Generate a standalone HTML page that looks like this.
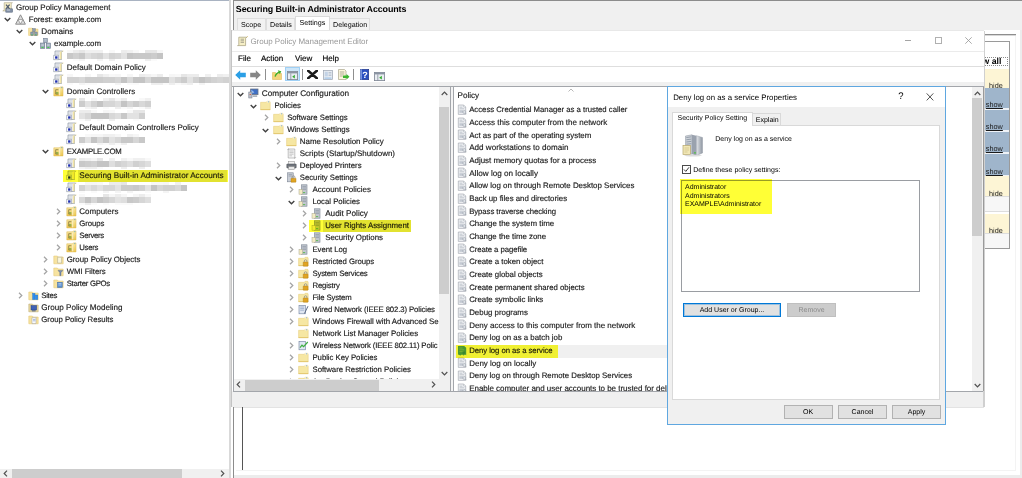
<!DOCTYPE html><html><head><meta charset="utf-8"><title>Group Policy Management</title><style>
html,body{margin:0;padding:0}
body{width:1022px;height:478px;overflow:hidden;background:#fff;position:relative;font-family:"Liberation Sans", sans-serif;text-rendering:geometricPrecision;}
#root{position:absolute;left:0;top:0;width:1022px;height:478px;will-change:transform}
.r{position:absolute}
.ic{position:absolute;display:block;line-height:0}
.ic svg{display:block;width:100%;height:100%}
.t{position:absolute;white-space:pre;line-height:12px;height:12px;font-size:8px;color:#1a1a1a;-webkit-text-stroke:.15px currentColor;margin-top:.9px}
.u{text-decoration:underline}

</style></head><body><div id="root">
<div class="r" style="left:0px;top:0px;width:229px;height:478px;background:#fff;"></div>
<div class="r" style="left:0px;top:0px;width:229px;height:1px;background:#a9b3c2;"></div>
<div class="ic" style="left:2px;top:2px;width:11px;height:11px"><svg width="11" height="11" viewBox="0 0 11 11"><path d="M2.200 .7h8.200c-.9.300-1.100.9-1.100 1.600v6.600H.8c1-.3 1.400-.8 1.400-1.700z" fill="#f5eec8" stroke="#a9a384" stroke-width=".6"/><path d="M4 2.600l3.600 4.200M7.600 2.600L4 6.800" stroke="#4f5a6b" stroke-width="1.300"/><rect x="3.800" y="6.800" width="6.800" height="3.400" fill="#7f8da3" stroke="#56647a" stroke-width=".5"/><path d="M4.800 8h3.400" stroke="#dfe6ee" stroke-width=".8"/></svg></div>
<div class="t " style="left:16.0px;top:1.0px;font-size:7.973px;color:#1a1a1a;">Group Policy Management</div>
<svg class="ic" style="left:4px;top:17px" width="7" height="5" viewBox="0 0 7 5"><path d="M.7 1l2.800 2.800L6.300 1" fill="none" stroke="#404040" stroke-width="1.350"/></svg>
<div class="ic" style="left:15px;top:14px;width:11px;height:11px"><svg width="11" height="11" viewBox="0 0 11 11"><path d="M5.500 .8L10.400 10.200H.6z" fill="#dcdcdc" stroke="#858585" stroke-width=".9" stroke-linejoin="round"/><path d="M3.100 5.600h4.800L5.500 10z" fill="#fff" stroke="#858585" stroke-width=".7" stroke-linejoin="round"/></svg></div>
<div class="t " style="left:28.667px;top:13.0px;font-size:7.797px;color:#1a1a1a;">Forest: example.com</div>
<svg class="ic" style="left:16px;top:29px" width="7" height="5" viewBox="0 0 7 5"><path d="M.7 1l2.800 2.800L6.300 1" fill="none" stroke="#404040" stroke-width="1.350"/></svg>
<div class="ic" style="left:28px;top:26px;width:11px;height:11px"><svg width="11" height="11" viewBox="0 0 11 11"><path d="M.6 2.2h3.6l.8.9h5v6.3H.6z" fill="#f7e3a0" stroke="#e3c56c" stroke-width=".5"/><rect x="4.6" y="2.6" width="2.6" height="3" fill="#8e9db0" stroke="#5d6c80" stroke-width=".4"/><rect x="2.8" y="6" width="2.6" height="3.6" fill="#8e9db0" stroke="#5d6c80" stroke-width=".4"/><rect x="6.6" y="6" width="2.6" height="3.6" fill="#8e9db0" stroke="#5d6c80" stroke-width=".4"/><rect x="3.4" y="8.4" width="1.2" height=".8" fill="#3fc43f"/><rect x="7.2" y="8.4" width="1.2" height=".8" fill="#3fc43f"/></svg></div>
<div class="t " style="left:41.334px;top:25.0px;font-size:8.135px;color:#1a1a1a;">Domains</div>
<svg class="ic" style="left:29px;top:41px" width="7" height="5" viewBox="0 0 7 5"><path d="M.7 1l2.800 2.800L6.300 1" fill="none" stroke="#404040" stroke-width="1.350"/></svg>
<div class="ic" style="left:40px;top:38px;width:11px;height:11px"><svg width="11" height="11" viewBox="0 0 11 11"><rect x="3.600" y=".4" width="3.800" height="4.200" fill="#9aa8ba" stroke="#5d6c80" stroke-width=".45"/><rect x=".4" y="5" width="4.400" height="5.600" fill="#9aa8ba" stroke="#5d6c80" stroke-width=".45"/><rect x="6.200" y="5" width="4.400" height="5.600" fill="#9aa8ba" stroke="#5d6c80" stroke-width=".45"/><rect x="1.500" y="8.900" width="2" height="1" fill="#3fd03f"/><rect x="7.300" y="8.900" width="2" height="1" fill="#3fd03f"/><path d="M1.300 6.300h2.600M1.300 7.600h2.600M7.100 6.300h2.600M7.100 7.600h2.600M4.400 1.700h2.200M4.400 3h2.200" stroke="#dfe5ec" stroke-width=".55"/></svg></div>
<div class="t " style="left:54.001px;top:37.0px;font-size:7.937px;color:#1a1a1a;">example.com</div>
<div class="ic" style="left:53px;top:50px;width:11px;height:11px"><svg width="11" height="11" viewBox="0 0 11 11"><path d="M2 1h7.500l-1 1.200v7.300H2z" fill="#eceef2" stroke="#8d96a4" stroke-width=".7"/><path d="M6.800 1.600h2.300l-.6.800v6.800H6.800z" fill="#f3e6a8"/><path d="M9.400 1l1-.5-.3 1.300z" fill="#e8c850"/><path d="M3.200 2.800h3M3.200 4.200h3" stroke="#c3c8d0" stroke-width=".6"/><rect x=".8" y="5.200" width="4.800" height="4.600" fill="#fff" stroke="#8d96a4" stroke-width=".6"/><rect x="2.100" y="6.300" width="2.400" height="2.400" fill="#2030b0"/></svg></div>
<div class="r" style="left:66.668px;top:50px;width:96px;height:3px;background:linear-gradient(90deg,rgb(248,248,248) 0px,rgb(248,248,248) 6px,rgb(236,236,236) 6px,rgb(236,236,236) 12px,rgb(230,230,230) 12px,rgb(230,230,230) 18px,rgb(240,240,240) 18px,rgb(240,240,240) 24px,rgb(240,240,240) 24px,rgb(240,240,240) 30px,rgb(240,240,240) 30px,rgb(240,240,240) 36px,rgb(255,255,255) 36px,rgb(255,255,255) 42px,rgb(248,248,248) 42px,rgb(248,248,248) 48px,rgb(255,255,255) 48px,rgb(255,255,255) 54px,rgb(236,236,236) 54px,rgb(236,236,236) 60px,rgb(240,240,240) 60px,rgb(240,240,240) 66px,rgb(248,248,248) 66px,rgb(248,248,248) 72px,rgb(255,255,255) 72px,rgb(255,255,255) 78px,rgb(230,230,230) 78px,rgb(230,230,230) 84px,rgb(230,230,230) 84px,rgb(230,230,230) 90px,rgb(246,246,246) 90px,rgb(246,246,246) 96px);filter:blur(.5px)"></div>
<div class="r" style="left:66.668px;top:53px;width:96px;height:6px;background:linear-gradient(90deg,rgb(200,200,200) 0px,rgb(200,200,200) 6px,rgb(208,208,208) 6px,rgb(208,208,208) 12px,rgb(200,200,200) 12px,rgb(200,200,200) 18px,rgb(222,222,222) 18px,rgb(222,222,222) 24px,rgb(214,214,214) 24px,rgb(214,214,214) 30px,rgb(210,210,210) 30px,rgb(210,210,210) 36px,rgb(226,226,226) 36px,rgb(226,226,226) 42px,rgb(210,210,210) 42px,rgb(210,210,210) 48px,rgb(214,214,214) 48px,rgb(214,214,214) 54px,rgb(226,226,226) 54px,rgb(226,226,226) 60px,rgb(196,196,196) 60px,rgb(196,196,196) 66px,rgb(200,200,200) 66px,rgb(200,200,200) 72px,rgb(200,200,200) 72px,rgb(200,200,200) 78px,rgb(200,200,200) 78px,rgb(200,200,200) 84px,rgb(204,204,204) 84px,rgb(204,204,204) 90px,rgb(196,196,196) 90px,rgb(196,196,196) 96px);filter:blur(.5px)"></div>
<div class="r" style="left:66.668px;top:59px;width:96px;height:2px;background:linear-gradient(90deg,rgb(255,255,255) 0px,rgb(255,255,255) 6px,rgb(250,250,250) 6px,rgb(250,250,250) 12px,rgb(244,244,244) 12px,rgb(244,244,244) 18px,rgb(255,255,255) 18px,rgb(255,255,255) 24px,rgb(255,255,255) 24px,rgb(255,255,255) 30px,rgb(244,244,244) 30px,rgb(244,244,244) 36px,rgb(255,255,255) 36px,rgb(255,255,255) 42px,rgb(238,238,238) 42px,rgb(238,238,238) 48px,rgb(255,255,255) 48px,rgb(255,255,255) 54px,rgb(255,255,255) 54px,rgb(255,255,255) 60px,rgb(255,255,255) 60px,rgb(255,255,255) 66px,rgb(255,255,255) 66px,rgb(255,255,255) 72px,rgb(255,255,255) 72px,rgb(255,255,255) 78px,rgb(238,238,238) 78px,rgb(238,238,238) 84px,rgb(250,250,250) 84px,rgb(250,250,250) 90px,rgb(255,255,255) 90px,rgb(255,255,255) 96px);filter:blur(.5px)"></div>
<div class="ic" style="left:53px;top:62px;width:11px;height:11px"><svg width="11" height="11" viewBox="0 0 11 11"><path d="M2 1h7.500l-1 1.200v7.300H2z" fill="#eceef2" stroke="#8d96a4" stroke-width=".7"/><path d="M6.800 1.600h2.300l-.6.800v6.800H6.800z" fill="#f3e6a8"/><path d="M9.400 1l1-.5-.3 1.300z" fill="#e8c850"/><path d="M3.200 2.800h3M3.200 4.200h3" stroke="#c3c8d0" stroke-width=".6"/><rect x=".8" y="5.200" width="4.800" height="4.600" fill="#fff" stroke="#8d96a4" stroke-width=".6"/><rect x="2.100" y="6.300" width="2.400" height="2.400" fill="#2030b0"/></svg></div>
<div class="t " style="left:66.668px;top:61.0px;font-size:8.061px;color:#1a1a1a;">Default Domain Policy</div>
<div class="ic" style="left:53px;top:74px;width:11px;height:11px"><svg width="11" height="11" viewBox="0 0 11 11"><path d="M2 1h7.500l-1 1.200v7.300H2z" fill="#eceef2" stroke="#8d96a4" stroke-width=".7"/><path d="M6.800 1.600h2.300l-.6.800v6.800H6.800z" fill="#f3e6a8"/><path d="M9.400 1l1-.5-.3 1.300z" fill="#e8c850"/><path d="M3.200 2.800h3M3.200 4.200h3" stroke="#c3c8d0" stroke-width=".6"/><rect x=".8" y="5.200" width="4.800" height="4.600" fill="#fff" stroke="#8d96a4" stroke-width=".6"/><rect x="2.100" y="6.300" width="2.400" height="2.400" fill="#2030b0"/></svg></div>
<div class="r" style="left:66.668px;top:74px;width:162px;height:3px;background:linear-gradient(90deg,rgb(246,246,246) 0px,rgb(246,246,246) 6px,rgb(255,255,255) 6px,rgb(255,255,255) 12px,rgb(255,255,255) 12px,rgb(255,255,255) 18px,rgb(246,246,246) 18px,rgb(246,246,246) 24px,rgb(255,255,255) 24px,rgb(255,255,255) 30px,rgb(230,230,230) 30px,rgb(230,230,230) 36px,rgb(240,240,240) 36px,rgb(240,240,240) 42px,rgb(248,248,248) 42px,rgb(248,248,248) 48px,rgb(246,246,246) 48px,rgb(246,246,246) 54px,rgb(255,255,255) 54px,rgb(255,255,255) 60px,rgb(246,246,246) 60px,rgb(246,246,246) 66px,rgb(255,255,255) 66px,rgb(255,255,255) 72px,rgb(236,236,236) 72px,rgb(236,236,236) 78px,rgb(240,240,240) 78px,rgb(240,240,240) 84px,rgb(246,246,246) 84px,rgb(246,246,246) 90px,rgb(236,236,236) 90px,rgb(236,236,236) 96px,rgb(255,255,255) 96px,rgb(255,255,255) 102px,rgb(246,246,246) 102px,rgb(246,246,246) 108px,rgb(248,248,248) 108px,rgb(248,248,248) 114px,rgb(230,230,230) 114px,rgb(230,230,230) 120px,rgb(236,236,236) 120px,rgb(236,236,236) 126px,rgb(236,236,236) 126px,rgb(236,236,236) 132px,rgb(255,255,255) 132px,rgb(255,255,255) 138px,rgb(240,240,240) 138px,rgb(240,240,240) 144px,rgb(255,255,255) 144px,rgb(255,255,255) 150px,rgb(236,236,236) 150px,rgb(236,236,236) 156px,rgb(240,240,240) 156px,rgb(240,240,240) 162px);filter:blur(.5px)"></div>
<div class="r" style="left:66.668px;top:77px;width:162px;height:6px;background:linear-gradient(90deg,rgb(210,210,210) 0px,rgb(210,210,210) 6px,rgb(210,210,210) 6px,rgb(210,210,210) 12px,rgb(216,216,216) 12px,rgb(216,216,216) 18px,rgb(204,204,204) 18px,rgb(204,204,204) 24px,rgb(204,204,204) 24px,rgb(204,204,204) 30px,rgb(204,204,204) 30px,rgb(204,204,204) 36px,rgb(208,208,208) 36px,rgb(208,208,208) 42px,rgb(208,208,208) 42px,rgb(208,208,208) 48px,rgb(214,214,214) 48px,rgb(214,214,214) 54px,rgb(196,196,196) 54px,rgb(196,196,196) 60px,rgb(216,216,216) 60px,rgb(216,216,216) 66px,rgb(196,196,196) 66px,rgb(196,196,196) 72px,rgb(196,196,196) 72px,rgb(196,196,196) 78px,rgb(214,214,214) 78px,rgb(214,214,214) 84px,rgb(196,196,196) 84px,rgb(196,196,196) 90px,rgb(196,196,196) 90px,rgb(196,196,196) 96px,rgb(196,196,196) 96px,rgb(196,196,196) 102px,rgb(226,226,226) 102px,rgb(226,226,226) 108px,rgb(214,214,214) 108px,rgb(214,214,214) 114px,rgb(204,204,204) 114px,rgb(204,204,204) 120px,rgb(226,226,226) 120px,rgb(226,226,226) 126px,rgb(210,210,210) 126px,rgb(210,210,210) 132px,rgb(196,196,196) 132px,rgb(196,196,196) 138px,rgb(204,204,204) 138px,rgb(204,204,204) 144px,rgb(210,210,210) 144px,rgb(210,210,210) 150px,rgb(214,214,214) 150px,rgb(214,214,214) 156px,rgb(210,210,210) 156px,rgb(210,210,210) 162px);filter:blur(.5px)"></div>
<div class="r" style="left:66.668px;top:83px;width:162px;height:2px;background:linear-gradient(90deg,rgb(250,250,250) 0px,rgb(250,250,250) 6px,rgb(255,255,255) 6px,rgb(255,255,255) 12px,rgb(244,244,244) 12px,rgb(244,244,244) 18px,rgb(250,250,250) 18px,rgb(250,250,250) 24px,rgb(250,250,250) 24px,rgb(250,250,250) 30px,rgb(255,255,255) 30px,rgb(255,255,255) 36px,rgb(255,255,255) 36px,rgb(255,255,255) 42px,rgb(255,255,255) 42px,rgb(255,255,255) 48px,rgb(244,244,244) 48px,rgb(244,244,244) 54px,rgb(255,255,255) 54px,rgb(255,255,255) 60px,rgb(250,250,250) 60px,rgb(250,250,250) 66px,rgb(250,250,250) 66px,rgb(250,250,250) 72px,rgb(255,255,255) 72px,rgb(255,255,255) 78px,rgb(255,255,255) 78px,rgb(255,255,255) 84px,rgb(238,238,238) 84px,rgb(238,238,238) 90px,rgb(238,238,238) 90px,rgb(238,238,238) 96px,rgb(250,250,250) 96px,rgb(250,250,250) 102px,rgb(238,238,238) 102px,rgb(238,238,238) 108px,rgb(250,250,250) 108px,rgb(250,250,250) 114px,rgb(244,244,244) 114px,rgb(244,244,244) 120px,rgb(238,238,238) 120px,rgb(238,238,238) 126px,rgb(255,255,255) 126px,rgb(255,255,255) 132px,rgb(244,244,244) 132px,rgb(244,244,244) 138px,rgb(255,255,255) 138px,rgb(255,255,255) 144px,rgb(255,255,255) 144px,rgb(255,255,255) 150px,rgb(255,255,255) 150px,rgb(255,255,255) 156px,rgb(255,255,255) 156px,rgb(255,255,255) 162px);filter:blur(.5px)"></div>
<svg class="ic" style="left:42px;top:89px" width="7" height="5" viewBox="0 0 7 5"><path d="M.7 1l2.800 2.800L6.300 1" fill="none" stroke="#404040" stroke-width="1.350"/></svg>
<div class="ic" style="left:53px;top:86px;width:11px;height:11px"><svg width="11" height="11" viewBox="0 0 11 11"><defs><linearGradient id="oug" x1="0" y1="0" x2="0" y2="1"><stop offset="0" stop-color="#faeaa6"/><stop offset="1" stop-color="#ecc752"/></linearGradient></defs><path d="M.8 1.800h5.800l.8-.9h2.600v9H.8z" fill="url(#oug)" stroke="#dcb74a" stroke-width=".5"/><rect x="5.900" y="2.400" width="1.400" height="7" fill="#fcf3cc" opacity=".75"/><path d="M5.400 3.700H2.700v4.400h2.700" fill="none" stroke="#7a6a30" stroke-width=".7"/><path d="M3 6.900h2.400" stroke="#4a9a30" stroke-width=".9"/><circle cx="8.800" cy="1.600" r=".55" fill="#58a8d0"/></svg></div>
<div class="t " style="left:66.668px;top:85.0px;font-size:8.039px;color:#1a1a1a;">Domain Controllers</div>
<div class="ic" style="left:66px;top:98px;width:11px;height:11px"><svg width="11" height="11" viewBox="0 0 11 11"><path d="M2 1h7.500l-1 1.200v7.300H2z" fill="#eceef2" stroke="#8d96a4" stroke-width=".7"/><path d="M6.800 1.600h2.300l-.6.800v6.800H6.800z" fill="#f3e6a8"/><path d="M9.400 1l1-.5-.3 1.300z" fill="#e8c850"/><path d="M3.200 2.800h3M3.200 4.200h3" stroke="#c3c8d0" stroke-width=".6"/><rect x=".8" y="5.200" width="4.800" height="4.600" fill="#fff" stroke="#8d96a4" stroke-width=".6"/><rect x="2.100" y="6.300" width="2.400" height="2.400" fill="#2030b0"/></svg></div>
<div class="r" style="left:79.33500000000001px;top:98px;width:72px;height:3px;background:linear-gradient(90deg,rgb(230,230,230) 0px,rgb(230,230,230) 6px,rgb(255,255,255) 6px,rgb(255,255,255) 12px,rgb(246,246,246) 12px,rgb(246,246,246) 18px,rgb(255,255,255) 18px,rgb(255,255,255) 24px,rgb(240,240,240) 24px,rgb(240,240,240) 30px,rgb(230,230,230) 30px,rgb(230,230,230) 36px,rgb(246,246,246) 36px,rgb(246,246,246) 42px,rgb(236,236,236) 42px,rgb(236,236,236) 48px,rgb(255,255,255) 48px,rgb(255,255,255) 54px,rgb(255,255,255) 54px,rgb(255,255,255) 60px,rgb(248,248,248) 60px,rgb(248,248,248) 66px,rgb(240,240,240) 66px,rgb(240,240,240) 72px);filter:blur(.5px)"></div>
<div class="r" style="left:79.33500000000001px;top:101px;width:72px;height:6px;background:linear-gradient(90deg,rgb(204,204,204) 0px,rgb(204,204,204) 6px,rgb(226,226,226) 6px,rgb(226,226,226) 12px,rgb(210,210,210) 12px,rgb(210,210,210) 18px,rgb(196,196,196) 18px,rgb(196,196,196) 24px,rgb(214,214,214) 24px,rgb(214,214,214) 30px,rgb(214,214,214) 30px,rgb(214,214,214) 36px,rgb(222,222,222) 36px,rgb(222,222,222) 42px,rgb(196,196,196) 42px,rgb(196,196,196) 48px,rgb(214,214,214) 48px,rgb(214,214,214) 54px,rgb(204,204,204) 54px,rgb(204,204,204) 60px,rgb(216,216,216) 60px,rgb(216,216,216) 66px,rgb(208,208,208) 66px,rgb(208,208,208) 72px);filter:blur(.5px)"></div>
<div class="r" style="left:79.33500000000001px;top:107px;width:72px;height:2px;background:linear-gradient(90deg,rgb(255,255,255) 0px,rgb(255,255,255) 6px,rgb(244,244,244) 6px,rgb(244,244,244) 12px,rgb(238,238,238) 12px,rgb(238,238,238) 18px,rgb(255,255,255) 18px,rgb(255,255,255) 24px,rgb(250,250,250) 24px,rgb(250,250,250) 30px,rgb(255,255,255) 30px,rgb(255,255,255) 36px,rgb(238,238,238) 36px,rgb(238,238,238) 42px,rgb(250,250,250) 42px,rgb(250,250,250) 48px,rgb(244,244,244) 48px,rgb(244,244,244) 54px,rgb(255,255,255) 54px,rgb(255,255,255) 60px,rgb(250,250,250) 60px,rgb(250,250,250) 66px,rgb(238,238,238) 66px,rgb(238,238,238) 72px);filter:blur(.5px)"></div>
<div class="ic" style="left:66px;top:110px;width:11px;height:11px"><svg width="11" height="11" viewBox="0 0 11 11"><path d="M2 1h7.500l-1 1.200v7.300H2z" fill="#eceef2" stroke="#8d96a4" stroke-width=".7"/><path d="M6.800 1.600h2.300l-.6.800v6.800H6.800z" fill="#f3e6a8"/><path d="M9.400 1l1-.5-.3 1.300z" fill="#e8c850"/><path d="M3.200 2.800h3M3.200 4.200h3" stroke="#c3c8d0" stroke-width=".6"/><rect x=".8" y="5.200" width="4.800" height="4.600" fill="#fff" stroke="#8d96a4" stroke-width=".6"/><rect x="2.100" y="6.300" width="2.400" height="2.400" fill="#2030b0"/></svg></div>
<div class="r" style="left:79.33500000000001px;top:110px;width:66px;height:3px;background:linear-gradient(90deg,rgb(236,236,236) 0px,rgb(236,236,236) 6px,rgb(236,236,236) 6px,rgb(236,236,236) 12px,rgb(248,248,248) 12px,rgb(248,248,248) 18px,rgb(255,255,255) 18px,rgb(255,255,255) 24px,rgb(246,246,246) 24px,rgb(246,246,246) 30px,rgb(248,248,248) 30px,rgb(248,248,248) 36px,rgb(255,255,255) 36px,rgb(255,255,255) 42px,rgb(255,255,255) 42px,rgb(255,255,255) 48px,rgb(248,248,248) 48px,rgb(248,248,248) 54px,rgb(230,230,230) 54px,rgb(230,230,230) 60px,rgb(230,230,230) 60px,rgb(230,230,230) 66px);filter:blur(.5px)"></div>
<div class="r" style="left:79.33500000000001px;top:113px;width:66px;height:6px;background:linear-gradient(90deg,rgb(226,226,226) 0px,rgb(226,226,226) 6px,rgb(216,216,216) 6px,rgb(216,216,216) 12px,rgb(196,196,196) 12px,rgb(196,196,196) 18px,rgb(196,196,196) 18px,rgb(196,196,196) 24px,rgb(196,196,196) 24px,rgb(196,196,196) 30px,rgb(216,216,216) 30px,rgb(216,216,216) 36px,rgb(222,222,222) 36px,rgb(222,222,222) 42px,rgb(200,200,200) 42px,rgb(200,200,200) 48px,rgb(226,226,226) 48px,rgb(226,226,226) 54px,rgb(226,226,226) 54px,rgb(226,226,226) 60px,rgb(208,208,208) 60px,rgb(208,208,208) 66px);filter:blur(.5px)"></div>
<div class="r" style="left:79.33500000000001px;top:119px;width:66px;height:2px;background:linear-gradient(90deg,rgb(250,250,250) 0px,rgb(250,250,250) 6px,rgb(238,238,238) 6px,rgb(238,238,238) 12px,rgb(255,255,255) 12px,rgb(255,255,255) 18px,rgb(250,250,250) 18px,rgb(250,250,250) 24px,rgb(255,255,255) 24px,rgb(255,255,255) 30px,rgb(238,238,238) 30px,rgb(238,238,238) 36px,rgb(255,255,255) 36px,rgb(255,255,255) 42px,rgb(255,255,255) 42px,rgb(255,255,255) 48px,rgb(255,255,255) 48px,rgb(255,255,255) 54px,rgb(250,250,250) 54px,rgb(250,250,250) 60px,rgb(255,255,255) 60px,rgb(255,255,255) 66px);filter:blur(.5px)"></div>
<div class="ic" style="left:66px;top:122px;width:11px;height:11px"><svg width="11" height="11" viewBox="0 0 11 11"><path d="M2 1h7.500l-1 1.200v7.300H2z" fill="#eceef2" stroke="#8d96a4" stroke-width=".7"/><path d="M6.800 1.600h2.300l-.6.800v6.800H6.800z" fill="#f3e6a8"/><path d="M9.400 1l1-.5-.3 1.300z" fill="#e8c850"/><path d="M3.200 2.800h3M3.200 4.200h3" stroke="#c3c8d0" stroke-width=".6"/><rect x=".8" y="5.200" width="4.800" height="4.600" fill="#fff" stroke="#8d96a4" stroke-width=".6"/><rect x="2.100" y="6.300" width="2.400" height="2.400" fill="#2030b0"/></svg></div>
<div class="t " style="left:79.33500000000001px;top:121.0px;font-size:7.993px;color:#1a1a1a;">Default Domain Controllers Policy</div>
<div class="ic" style="left:66px;top:134px;width:11px;height:11px"><svg width="11" height="11" viewBox="0 0 11 11"><path d="M2 1h7.500l-1 1.200v7.300H2z" fill="#eceef2" stroke="#8d96a4" stroke-width=".7"/><path d="M6.800 1.600h2.300l-.6.800v6.800H6.800z" fill="#f3e6a8"/><path d="M9.400 1l1-.5-.3 1.300z" fill="#e8c850"/><path d="M3.200 2.800h3M3.200 4.200h3" stroke="#c3c8d0" stroke-width=".6"/><rect x=".8" y="5.200" width="4.800" height="4.600" fill="#fff" stroke="#8d96a4" stroke-width=".6"/><rect x="2.100" y="6.300" width="2.400" height="2.400" fill="#2030b0"/></svg></div>
<div class="r" style="left:79.33500000000001px;top:134px;width:66px;height:3px;background:linear-gradient(90deg,rgb(255,255,255) 0px,rgb(255,255,255) 6px,rgb(248,248,248) 6px,rgb(248,248,248) 12px,rgb(246,246,246) 12px,rgb(246,246,246) 18px,rgb(246,246,246) 18px,rgb(246,246,246) 24px,rgb(240,240,240) 24px,rgb(240,240,240) 30px,rgb(240,240,240) 30px,rgb(240,240,240) 36px,rgb(246,246,246) 36px,rgb(246,246,246) 42px,rgb(255,255,255) 42px,rgb(255,255,255) 48px,rgb(240,240,240) 48px,rgb(240,240,240) 54px,rgb(246,246,246) 54px,rgb(246,246,246) 60px,rgb(255,255,255) 60px,rgb(255,255,255) 66px);filter:blur(.5px)"></div>
<div class="r" style="left:79.33500000000001px;top:137px;width:66px;height:6px;background:linear-gradient(90deg,rgb(204,204,204) 0px,rgb(204,204,204) 6px,rgb(226,226,226) 6px,rgb(226,226,226) 12px,rgb(196,196,196) 12px,rgb(196,196,196) 18px,rgb(216,216,216) 18px,rgb(216,216,216) 24px,rgb(200,200,200) 24px,rgb(200,200,200) 30px,rgb(226,226,226) 30px,rgb(226,226,226) 36px,rgb(216,216,216) 36px,rgb(216,216,216) 42px,rgb(200,200,200) 42px,rgb(200,200,200) 48px,rgb(200,200,200) 48px,rgb(200,200,200) 54px,rgb(214,214,214) 54px,rgb(214,214,214) 60px,rgb(200,200,200) 60px,rgb(200,200,200) 66px);filter:blur(.5px)"></div>
<div class="r" style="left:79.33500000000001px;top:143px;width:66px;height:2px;background:linear-gradient(90deg,rgb(250,250,250) 0px,rgb(250,250,250) 6px,rgb(255,255,255) 6px,rgb(255,255,255) 12px,rgb(255,255,255) 12px,rgb(255,255,255) 18px,rgb(244,244,244) 18px,rgb(244,244,244) 24px,rgb(250,250,250) 24px,rgb(250,250,250) 30px,rgb(238,238,238) 30px,rgb(238,238,238) 36px,rgb(250,250,250) 36px,rgb(250,250,250) 42px,rgb(238,238,238) 42px,rgb(238,238,238) 48px,rgb(255,255,255) 48px,rgb(255,255,255) 54px,rgb(255,255,255) 54px,rgb(255,255,255) 60px,rgb(255,255,255) 60px,rgb(255,255,255) 66px);filter:blur(.5px)"></div>
<svg class="ic" style="left:42px;top:149px" width="7" height="5" viewBox="0 0 7 5"><path d="M.7 1l2.800 2.800L6.300 1" fill="none" stroke="#404040" stroke-width="1.350"/></svg>
<div class="ic" style="left:53px;top:146px;width:11px;height:11px"><svg width="11" height="11" viewBox="0 0 11 11"><defs><linearGradient id="oug" x1="0" y1="0" x2="0" y2="1"><stop offset="0" stop-color="#faeaa6"/><stop offset="1" stop-color="#ecc752"/></linearGradient></defs><path d="M.8 1.800h5.800l.8-.9h2.600v9H.8z" fill="url(#oug)" stroke="#dcb74a" stroke-width=".5"/><rect x="5.900" y="2.400" width="1.400" height="7" fill="#fcf3cc" opacity=".75"/><path d="M5.400 3.700H2.700v4.400h2.700" fill="none" stroke="#7a6a30" stroke-width=".7"/><path d="M3 6.900h2.400" stroke="#4a9a30" stroke-width=".9"/><circle cx="8.800" cy="1.600" r=".55" fill="#58a8d0"/></svg></div>
<div class="t " style="left:66.668px;top:145.0px;font-size:7.76px;color:#1a1a1a;letter-spacing:-0.172px;">EXAMPLE.COM</div>
<div class="ic" style="left:66px;top:158px;width:11px;height:11px"><svg width="11" height="11" viewBox="0 0 11 11"><path d="M2 1h7.500l-1 1.200v7.300H2z" fill="#eceef2" stroke="#8d96a4" stroke-width=".7"/><path d="M6.800 1.600h2.300l-.6.800v6.800H6.800z" fill="#f3e6a8"/><path d="M9.400 1l1-.5-.3 1.300z" fill="#e8c850"/><path d="M3.200 2.800h3M3.200 4.200h3" stroke="#c3c8d0" stroke-width=".6"/><rect x=".8" y="5.200" width="4.800" height="4.600" fill="#fff" stroke="#8d96a4" stroke-width=".6"/><rect x="2.100" y="6.300" width="2.400" height="2.400" fill="#2030b0"/></svg></div>
<div class="r" style="left:79.33500000000001px;top:158px;width:72px;height:3px;background:linear-gradient(90deg,rgb(236,236,236) 0px,rgb(236,236,236) 6px,rgb(240,240,240) 6px,rgb(240,240,240) 12px,rgb(246,246,246) 12px,rgb(246,246,246) 18px,rgb(230,230,230) 18px,rgb(230,230,230) 24px,rgb(255,255,255) 24px,rgb(255,255,255) 30px,rgb(240,240,240) 30px,rgb(240,240,240) 36px,rgb(255,255,255) 36px,rgb(255,255,255) 42px,rgb(240,240,240) 42px,rgb(240,240,240) 48px,rgb(248,248,248) 48px,rgb(248,248,248) 54px,rgb(240,240,240) 54px,rgb(240,240,240) 60px,rgb(240,240,240) 60px,rgb(240,240,240) 66px,rgb(248,248,248) 66px,rgb(248,248,248) 72px);filter:blur(.5px)"></div>
<div class="r" style="left:79.33500000000001px;top:161px;width:72px;height:6px;background:linear-gradient(90deg,rgb(200,200,200) 0px,rgb(200,200,200) 6px,rgb(204,204,204) 6px,rgb(204,204,204) 12px,rgb(208,208,208) 12px,rgb(208,208,208) 18px,rgb(196,196,196) 18px,rgb(196,196,196) 24px,rgb(196,196,196) 24px,rgb(196,196,196) 30px,rgb(222,222,222) 30px,rgb(222,222,222) 36px,rgb(208,208,208) 36px,rgb(208,208,208) 42px,rgb(214,214,214) 42px,rgb(214,214,214) 48px,rgb(222,222,222) 48px,rgb(222,222,222) 54px,rgb(208,208,208) 54px,rgb(208,208,208) 60px,rgb(214,214,214) 60px,rgb(214,214,214) 66px,rgb(222,222,222) 66px,rgb(222,222,222) 72px);filter:blur(.5px)"></div>
<div class="r" style="left:79.33500000000001px;top:167px;width:72px;height:2px;background:linear-gradient(90deg,rgb(244,244,244) 0px,rgb(244,244,244) 6px,rgb(238,238,238) 6px,rgb(238,238,238) 12px,rgb(238,238,238) 12px,rgb(238,238,238) 18px,rgb(250,250,250) 18px,rgb(250,250,250) 24px,rgb(255,255,255) 24px,rgb(255,255,255) 30px,rgb(255,255,255) 30px,rgb(255,255,255) 36px,rgb(255,255,255) 36px,rgb(255,255,255) 42px,rgb(238,238,238) 42px,rgb(238,238,238) 48px,rgb(255,255,255) 48px,rgb(255,255,255) 54px,rgb(255,255,255) 54px,rgb(255,255,255) 60px,rgb(238,238,238) 60px,rgb(238,238,238) 66px,rgb(255,255,255) 66px,rgb(255,255,255) 72px);filter:blur(.5px)"></div>
<div class="r" style="left:78px;top:170px;width:149px;height:12px;background:#e2e2e2;"></div>
<div class="ic" style="left:66px;top:170px;width:11px;height:11px"><svg width="11" height="11" viewBox="0 0 11 11"><path d="M2 1h7.500l-1 1.200v7.300H2z" fill="#eceef2" stroke="#8d96a4" stroke-width=".7"/><path d="M6.800 1.600h2.300l-.6.800v6.800H6.800z" fill="#f3e6a8"/><path d="M9.400 1l1-.5-.3 1.300z" fill="#e8c850"/><path d="M3.200 2.800h3M3.200 4.200h3" stroke="#c3c8d0" stroke-width=".6"/><rect x=".8" y="5.200" width="4.800" height="4.600" fill="#fff" stroke="#8d96a4" stroke-width=".6"/><rect x="2.100" y="6.300" width="2.400" height="2.400" fill="#2030b0"/></svg></div>
<div class="t " style="left:79.33500000000001px;top:169.0px;font-size:8.155px;color:#1a1a1a;">Securing Built-in Administrator Accounts</div>
<div class="ic" style="left:66px;top:182px;width:11px;height:11px"><svg width="11" height="11" viewBox="0 0 11 11"><path d="M2 1h7.500l-1 1.200v7.300H2z" fill="#eceef2" stroke="#8d96a4" stroke-width=".7"/><path d="M6.800 1.600h2.300l-.6.800v6.800H6.800z" fill="#f3e6a8"/><path d="M9.400 1l1-.5-.3 1.300z" fill="#e8c850"/><path d="M3.200 2.800h3M3.200 4.200h3" stroke="#c3c8d0" stroke-width=".6"/><rect x=".8" y="5.200" width="4.800" height="4.600" fill="#fff" stroke="#8d96a4" stroke-width=".6"/><rect x="2.100" y="6.300" width="2.400" height="2.400" fill="#2030b0"/></svg></div>
<div class="r" style="left:79.33500000000001px;top:182px;width:108px;height:3px;background:linear-gradient(90deg,rgb(255,255,255) 0px,rgb(255,255,255) 6px,rgb(246,246,246) 6px,rgb(246,246,246) 12px,rgb(246,246,246) 12px,rgb(246,246,246) 18px,rgb(248,248,248) 18px,rgb(248,248,248) 24px,rgb(255,255,255) 24px,rgb(255,255,255) 30px,rgb(236,236,236) 30px,rgb(236,236,236) 36px,rgb(236,236,236) 36px,rgb(236,236,236) 42px,rgb(230,230,230) 42px,rgb(230,230,230) 48px,rgb(255,255,255) 48px,rgb(255,255,255) 54px,rgb(255,255,255) 54px,rgb(255,255,255) 60px,rgb(255,255,255) 60px,rgb(255,255,255) 66px,rgb(255,255,255) 66px,rgb(255,255,255) 72px,rgb(248,248,248) 72px,rgb(248,248,248) 78px,rgb(248,248,248) 78px,rgb(248,248,248) 84px,rgb(246,246,246) 84px,rgb(246,246,246) 90px,rgb(255,255,255) 90px,rgb(255,255,255) 96px,rgb(240,240,240) 96px,rgb(240,240,240) 102px,rgb(255,255,255) 102px,rgb(255,255,255) 108px);filter:blur(.5px)"></div>
<div class="r" style="left:79.33500000000001px;top:185px;width:108px;height:6px;background:linear-gradient(90deg,rgb(210,210,210) 0px,rgb(210,210,210) 6px,rgb(226,226,226) 6px,rgb(226,226,226) 12px,rgb(216,216,216) 12px,rgb(216,216,216) 18px,rgb(226,226,226) 18px,rgb(226,226,226) 24px,rgb(214,214,214) 24px,rgb(214,214,214) 30px,rgb(214,214,214) 30px,rgb(214,214,214) 36px,rgb(226,226,226) 36px,rgb(226,226,226) 42px,rgb(204,204,204) 42px,rgb(204,204,204) 48px,rgb(204,204,204) 48px,rgb(204,204,204) 54px,rgb(200,200,200) 54px,rgb(200,200,200) 60px,rgb(208,208,208) 60px,rgb(208,208,208) 66px,rgb(226,226,226) 66px,rgb(226,226,226) 72px,rgb(196,196,196) 72px,rgb(196,196,196) 78px,rgb(214,214,214) 78px,rgb(214,214,214) 84px,rgb(208,208,208) 84px,rgb(208,208,208) 90px,rgb(208,208,208) 90px,rgb(208,208,208) 96px,rgb(216,216,216) 96px,rgb(216,216,216) 102px,rgb(196,196,196) 102px,rgb(196,196,196) 108px);filter:blur(.5px)"></div>
<div class="r" style="left:79.33500000000001px;top:191px;width:108px;height:2px;background:linear-gradient(90deg,rgb(250,250,250) 0px,rgb(250,250,250) 6px,rgb(255,255,255) 6px,rgb(255,255,255) 12px,rgb(250,250,250) 12px,rgb(250,250,250) 18px,rgb(255,255,255) 18px,rgb(255,255,255) 24px,rgb(244,244,244) 24px,rgb(244,244,244) 30px,rgb(255,255,255) 30px,rgb(255,255,255) 36px,rgb(244,244,244) 36px,rgb(244,244,244) 42px,rgb(255,255,255) 42px,rgb(255,255,255) 48px,rgb(244,244,244) 48px,rgb(244,244,244) 54px,rgb(255,255,255) 54px,rgb(255,255,255) 60px,rgb(255,255,255) 60px,rgb(255,255,255) 66px,rgb(250,250,250) 66px,rgb(250,250,250) 72px,rgb(255,255,255) 72px,rgb(255,255,255) 78px,rgb(255,255,255) 78px,rgb(255,255,255) 84px,rgb(244,244,244) 84px,rgb(244,244,244) 90px,rgb(255,255,255) 90px,rgb(255,255,255) 96px,rgb(255,255,255) 96px,rgb(255,255,255) 102px,rgb(255,255,255) 102px,rgb(255,255,255) 108px);filter:blur(.5px)"></div>
<div class="ic" style="left:66px;top:194px;width:11px;height:11px"><svg width="11" height="11" viewBox="0 0 11 11"><path d="M2 1h7.500l-1 1.200v7.300H2z" fill="#eceef2" stroke="#8d96a4" stroke-width=".7"/><path d="M6.800 1.600h2.300l-.6.800v6.800H6.800z" fill="#f3e6a8"/><path d="M9.400 1l1-.5-.3 1.300z" fill="#e8c850"/><path d="M3.200 2.800h3M3.200 4.200h3" stroke="#c3c8d0" stroke-width=".6"/><rect x=".8" y="5.200" width="4.800" height="4.600" fill="#fff" stroke="#8d96a4" stroke-width=".6"/><rect x="2.100" y="6.300" width="2.400" height="2.400" fill="#2030b0"/></svg></div>
<div class="r" style="left:79.33500000000001px;top:194px;width:72px;height:3px;background:linear-gradient(90deg,rgb(248,248,248) 0px,rgb(248,248,248) 6px,rgb(255,255,255) 6px,rgb(255,255,255) 12px,rgb(255,255,255) 12px,rgb(255,255,255) 18px,rgb(255,255,255) 18px,rgb(255,255,255) 24px,rgb(230,230,230) 24px,rgb(230,230,230) 30px,rgb(246,246,246) 30px,rgb(246,246,246) 36px,rgb(236,236,236) 36px,rgb(236,236,236) 42px,rgb(246,246,246) 42px,rgb(246,246,246) 48px,rgb(255,255,255) 48px,rgb(255,255,255) 54px,rgb(246,246,246) 54px,rgb(246,246,246) 60px,rgb(236,236,236) 60px,rgb(236,236,236) 66px,rgb(248,248,248) 66px,rgb(248,248,248) 72px);filter:blur(.5px)"></div>
<div class="r" style="left:79.33500000000001px;top:197px;width:72px;height:6px;background:linear-gradient(90deg,rgb(216,216,216) 0px,rgb(216,216,216) 6px,rgb(196,196,196) 6px,rgb(196,196,196) 12px,rgb(214,214,214) 12px,rgb(214,214,214) 18px,rgb(196,196,196) 18px,rgb(196,196,196) 24px,rgb(204,204,204) 24px,rgb(204,204,204) 30px,rgb(214,214,214) 30px,rgb(214,214,214) 36px,rgb(226,226,226) 36px,rgb(226,226,226) 42px,rgb(222,222,222) 42px,rgb(222,222,222) 48px,rgb(200,200,200) 48px,rgb(200,200,200) 54px,rgb(204,204,204) 54px,rgb(204,204,204) 60px,rgb(214,214,214) 60px,rgb(214,214,214) 66px,rgb(222,222,222) 66px,rgb(222,222,222) 72px);filter:blur(.5px)"></div>
<div class="r" style="left:79.33500000000001px;top:203px;width:72px;height:2px;background:linear-gradient(90deg,rgb(250,250,250) 0px,rgb(250,250,250) 6px,rgb(238,238,238) 6px,rgb(238,238,238) 12px,rgb(250,250,250) 12px,rgb(250,250,250) 18px,rgb(255,255,255) 18px,rgb(255,255,255) 24px,rgb(250,250,250) 24px,rgb(250,250,250) 30px,rgb(255,255,255) 30px,rgb(255,255,255) 36px,rgb(250,250,250) 36px,rgb(250,250,250) 42px,rgb(250,250,250) 42px,rgb(250,250,250) 48px,rgb(250,250,250) 48px,rgb(250,250,250) 54px,rgb(255,255,255) 54px,rgb(255,255,255) 60px,rgb(255,255,255) 60px,rgb(255,255,255) 66px,rgb(255,255,255) 66px,rgb(255,255,255) 72px);filter:blur(.5px)"></div>
<svg class="ic" style="left:56px;top:208px" width="5" height="7" viewBox="0 0 5 7"><path d="M1 .7l2.800 2.800L1 6.300" fill="none" stroke="#a4a4a4" stroke-width="1.250"/></svg>
<div class="ic" style="left:66px;top:206px;width:11px;height:11px"><svg width="11" height="11" viewBox="0 0 11 11"><defs><linearGradient id="oug" x1="0" y1="0" x2="0" y2="1"><stop offset="0" stop-color="#faeaa6"/><stop offset="1" stop-color="#ecc752"/></linearGradient></defs><path d="M.8 1.800h5.800l.8-.9h2.600v9H.8z" fill="url(#oug)" stroke="#dcb74a" stroke-width=".5"/><rect x="5.900" y="2.400" width="1.400" height="7" fill="#fcf3cc" opacity=".75"/><path d="M5.400 3.700H2.700v4.400h2.700" fill="none" stroke="#7a6a30" stroke-width=".7"/><path d="M3 6.900h2.400" stroke="#4a9a30" stroke-width=".9"/><circle cx="8.800" cy="1.600" r=".55" fill="#58a8d0"/></svg></div>
<div class="t " style="left:79.33500000000001px;top:205.0px;font-size:8.015px;color:#1a1a1a;">Computers</div>
<svg class="ic" style="left:56px;top:220px" width="5" height="7" viewBox="0 0 5 7"><path d="M1 .7l2.800 2.800L1 6.300" fill="none" stroke="#a4a4a4" stroke-width="1.250"/></svg>
<div class="ic" style="left:66px;top:218px;width:11px;height:11px"><svg width="11" height="11" viewBox="0 0 11 11"><defs><linearGradient id="oug" x1="0" y1="0" x2="0" y2="1"><stop offset="0" stop-color="#faeaa6"/><stop offset="1" stop-color="#ecc752"/></linearGradient></defs><path d="M.8 1.800h5.800l.8-.9h2.600v9H.8z" fill="url(#oug)" stroke="#dcb74a" stroke-width=".5"/><rect x="5.900" y="2.400" width="1.400" height="7" fill="#fcf3cc" opacity=".75"/><path d="M5.400 3.700H2.700v4.400h2.700" fill="none" stroke="#7a6a30" stroke-width=".7"/><path d="M3 6.900h2.400" stroke="#4a9a30" stroke-width=".9"/><circle cx="8.800" cy="1.600" r=".55" fill="#58a8d0"/></svg></div>
<div class="t " style="left:79.33500000000001px;top:217.0px;font-size:7.76px;color:#1a1a1a;letter-spacing:-0.069px;">Groups</div>
<svg class="ic" style="left:56px;top:232px" width="5" height="7" viewBox="0 0 5 7"><path d="M1 .7l2.800 2.800L1 6.300" fill="none" stroke="#a4a4a4" stroke-width="1.250"/></svg>
<div class="ic" style="left:66px;top:230px;width:11px;height:11px"><svg width="11" height="11" viewBox="0 0 11 11"><defs><linearGradient id="oug" x1="0" y1="0" x2="0" y2="1"><stop offset="0" stop-color="#faeaa6"/><stop offset="1" stop-color="#ecc752"/></linearGradient></defs><path d="M.8 1.800h5.800l.8-.9h2.600v9H.8z" fill="url(#oug)" stroke="#dcb74a" stroke-width=".5"/><rect x="5.900" y="2.400" width="1.400" height="7" fill="#fcf3cc" opacity=".75"/><path d="M5.400 3.700H2.700v4.400h2.700" fill="none" stroke="#7a6a30" stroke-width=".7"/><path d="M3 6.900h2.400" stroke="#4a9a30" stroke-width=".9"/><circle cx="8.800" cy="1.600" r=".55" fill="#58a8d0"/></svg></div>
<div class="t " style="left:79.33500000000001px;top:229.0px;font-size:7.76px;color:#1a1a1a;letter-spacing:-0.3px;">Servers</div>
<svg class="ic" style="left:56px;top:244px" width="5" height="7" viewBox="0 0 5 7"><path d="M1 .7l2.800 2.800L1 6.300" fill="none" stroke="#a4a4a4" stroke-width="1.250"/></svg>
<div class="ic" style="left:66px;top:242px;width:11px;height:11px"><svg width="11" height="11" viewBox="0 0 11 11"><defs><linearGradient id="oug" x1="0" y1="0" x2="0" y2="1"><stop offset="0" stop-color="#faeaa6"/><stop offset="1" stop-color="#ecc752"/></linearGradient></defs><path d="M.8 1.800h5.800l.8-.9h2.600v9H.8z" fill="url(#oug)" stroke="#dcb74a" stroke-width=".5"/><rect x="5.900" y="2.400" width="1.400" height="7" fill="#fcf3cc" opacity=".75"/><path d="M5.400 3.700H2.700v4.400h2.700" fill="none" stroke="#7a6a30" stroke-width=".7"/><path d="M3 6.900h2.400" stroke="#4a9a30" stroke-width=".9"/><circle cx="8.800" cy="1.600" r=".55" fill="#58a8d0"/></svg></div>
<div class="t " style="left:79.33500000000001px;top:241.0px;font-size:7.76px;color:#1a1a1a;letter-spacing:-0.3px;">Users</div>
<svg class="ic" style="left:43px;top:256px" width="5" height="7" viewBox="0 0 5 7"><path d="M1 .7l2.800 2.800L1 6.300" fill="none" stroke="#a4a4a4" stroke-width="1.250"/></svg>
<div class="ic" style="left:53px;top:254px;width:11px;height:11px"><svg width="11" height="11" viewBox="0 0 11 11"><path d="M.8 2h3.6l.8 1h5v6.8H.8z" fill="#f7e3a0" stroke="#e3c56c" stroke-width=".5"/><path d="M4.6 3.2h4.6l-.6.8v5H4.6z" fill="#faf6dc" stroke="#a9a58c" stroke-width=".5"/></svg></div>
<div class="t " style="left:66.668px;top:253.0px;font-size:7.857px;color:#1a1a1a;">Group Policy Objects</div>
<svg class="ic" style="left:43px;top:268px" width="5" height="7" viewBox="0 0 5 7"><path d="M1 .7l2.800 2.800L1 6.300" fill="none" stroke="#a4a4a4" stroke-width="1.250"/></svg>
<div class="ic" style="left:53px;top:266px;width:11px;height:11px"><svg width="11" height="11" viewBox="0 0 11 11"><path d="M.8 2h3.6l.8 1h5v6.8H.8z" fill="#f7e3a0" stroke="#e3c56c" stroke-width=".5"/><path d="M5 4.4h4.8L8 6.6v3H6.8v-3z" fill="#7d8fb0" stroke="#4d5f80" stroke-width=".4"/></svg></div>
<div class="t " style="left:66.668px;top:265.0px;font-size:7.76px;color:#1a1a1a;letter-spacing:-0.022px;">WMI Filters</div>
<svg class="ic" style="left:43px;top:280px" width="5" height="7" viewBox="0 0 5 7"><path d="M1 .7l2.800 2.800L1 6.300" fill="none" stroke="#a4a4a4" stroke-width="1.250"/></svg>
<div class="ic" style="left:53px;top:278px;width:11px;height:11px"><svg width="11" height="11" viewBox="0 0 11 11"><path d="M.8 2h3.6l.8 1h5v6.8H.8z" fill="#f7e3a0" stroke="#e3c56c" stroke-width=".5"/><rect x="4.4" y="4.2" width="5" height="5.4" fill="#5a8fd0" stroke="#3a64a0" stroke-width=".4"/><path d="M5.4 5.6h3M5.4 7h3" stroke="#dfeaf8" stroke-width=".6"/></svg></div>
<div class="t " style="left:66.668px;top:277.0px;font-size:7.76px;color:#1a1a1a;letter-spacing:-0.27px;">Starter GPOs</div>
<svg class="ic" style="left:18px;top:292px" width="5" height="7" viewBox="0 0 5 7"><path d="M1 .7l2.800 2.800L1 6.300" fill="none" stroke="#a4a4a4" stroke-width="1.250"/></svg>
<div class="ic" style="left:28px;top:290px;width:11px;height:11px"><svg width="11" height="11" viewBox="0 0 11 11"><path d="M.8 2h3.6l.8 1h5v6.8H.8z" fill="#f7e3a0" stroke="#e3c56c" stroke-width=".5"/><rect x="4.6" y="3.4" width="2.4" height="6.2" fill="#2e8ff0" stroke="#1f6fc8" stroke-width=".4"/><rect x="7.4" y="5" width="2.4" height="4.6" fill="#2e8ff0" stroke="#1f6fc8" stroke-width=".4"/></svg></div>
<div class="t " style="left:41.334px;top:289.0px;font-size:7.76px;color:#1a1a1a;letter-spacing:-0.3px;">Sites</div>
<div class="ic" style="left:28px;top:302px;width:11px;height:11px"><svg width="11" height="11" viewBox="0 0 11 11"><path d="M.8 2h3.6l.8 1h5v6.8H.8z" fill="#e8d9a0" stroke="#b9a66a" stroke-width=".5"/><rect x="3" y="3.6" width="5.6" height="4.4" fill="#3f62b6" stroke="#223c80" stroke-width=".5"/><rect x="4" y="8.2" width="3.6" height="1.2" fill="#5c6c8c"/></svg></div>
<div class="t " style="left:41.334px;top:301.0px;font-size:8.091px;color:#1a1a1a;">Group Policy Modeling</div>
<div class="ic" style="left:28px;top:314px;width:11px;height:11px"><svg width="11" height="11" viewBox="0 0 11 11"><path d="M.8 2h3.6l.8 1h5v6.8H.8z" fill="#f7e3a0" stroke="#e3c56c" stroke-width=".5"/><path d="M4 3.6h4.6l-.6.8v5.2H4z" fill="#fbfbfb" stroke="#9c9c9c" stroke-width=".5"/><path d="M5 5.4h2.4M5 6.8h2.4" stroke="#6d8fd0" stroke-width=".6"/></svg></div>
<div class="t " style="left:41.334px;top:313.0px;font-size:7.76px;color:#1a1a1a;letter-spacing:-0.019px;">Group Policy Results</div>
<div class="r" style="left:0px;top:469px;width:229px;height:9px;background:#f0f0f0;"></div>
<div class="r" style="left:12px;top:469px;width:170px;height:9px;background:#cdcdcd;"></div>
<svg class="ic" style="left:3px;top:470px" width="5" height="7" viewBox="0 0 5 7"><path d="M4 .7L1.200 3.500 4 6.300" fill="none" stroke="#505050" stroke-width="1.200"/></svg>
<svg class="ic" style="left:220px;top:470px" width="5" height="7" viewBox="0 0 5 7"><path d="M1 .7l2.800 2.800L1 6.300" fill="none" stroke="#505050" stroke-width="1.200"/></svg>
<div class="r" style="left:229px;top:0px;width:2px;height:478px;background:#d9d9d9;"></div>
<div class="r" style="left:231px;top:0px;width:1.5px;height:478px;background:#fff;"></div>
<div class="r" style="left:232.5px;top:0px;width:1.5px;height:478px;background:#8c8c8c;"></div>
<div class="r" style="left:234px;top:0px;width:788px;height:478px;background:#f0f0f0;"></div>
<div class="r" style="left:232.5px;top:0px;width:790px;height:1px;background:#8c8c8c;"></div>
<div class="t " style="left:235.8px;top:2.1999999999999993px;font-size:8.924px;color:#000;font-weight:700;letter-spacing:-0.099px;-webkit-text-stroke:0;">Securing Built-in Administrator Accounts</div>
<div class="r" style="left:237px;top:18px;width:29px;height:13px;background:#f2f2f2;border:1px solid #dedede;border-bottom:none;box-sizing:border-box"></div>
<div class="t " style="left:241px;top:18.5px;font-size:7.15px;color:#000;-webkit-text-stroke:0;">Scope</div>
<div class="r" style="left:266px;top:18px;width:29px;height:13px;background:#f2f2f2;border:1px solid #dedede;border-bottom:none;box-sizing:border-box"></div>
<div class="t " style="left:270px;top:18.5px;font-size:7.15px;color:#000;-webkit-text-stroke:0;">Details</div>
<div class="r" style="left:329px;top:18px;width:41px;height:13px;background:#f2f2f2;border:1px solid #dedede;border-bottom:none;box-sizing:border-box"></div>
<div class="t " style="left:333px;top:18.5px;font-size:7.15px;color:#000;-webkit-text-stroke:0;">Delegation</div>
<div class="r" style="left:295px;top:16px;width:35px;height:15px;background:#fff;border:1px solid #dadada;border-bottom:none;box-sizing:border-box"></div>
<div class="t " style="left:299.5px;top:16.6px;font-size:7.15px;color:#000;-webkit-text-stroke:0;">Settings</div>
<div class="r" style="left:234px;top:407px;width:788px;height:71px;background:#fff;"></div>
<div class="r" style="left:984px;top:30px;width:38px;height:448px;background:#fff;"></div>
<div class="r" style="left:234px;top:407px;width:750px;height:1px;background:#e3e3e3;"></div>
<div class="r" style="left:242px;top:407px;width:1px;height:64px;background:#555;"></div>
<div class="r" style="left:236px;top:470px;width:780px;height:1px;background:#f3f3f3;"></div>
<div class="r" style="left:1015px;top:35px;width:1px;height:436px;background:#f3f3f3;"></div>
<div class="r" style="left:234px;top:475px;width:788px;height:3px;background:#ececec;"></div>
<div class="r" style="left:1020px;top:30px;width:2px;height:448px;background:#ececec;"></div>
<div class="r" style="left:984px;top:34px;width:32px;height:1px;background:#8e8e8e;"></div>
<div class="r" style="left:984px;top:35px;width:32px;height:1px;background:#d8d8d8;"></div>
<div class="r" style="left:984px;top:41px;width:26px;height:208px;background:#fff;border:1px solid #9a9a9a;border-left:none;box-sizing:border-box"></div>
<div class="t " style="left:982.6px;top:54.6px;font-size:8.7px;color:#000;font-weight:700;-webkit-text-stroke:0;text-rendering:geometricPrecision;">w all</div>
<div class="r" style="left:984px;top:57px;width:24px;height:9px;background:transparent;border:1px dotted #8a8a8a;border-left:none;box-sizing:border-box"></div>
<div class="r" style="left:984px;top:69px;width:25px;height:19px;background:#fdf5d5;"></div>
<div class="t " style="left:989px;top:78.8px;font-size:7.3px;color:#1a1a1a;-webkit-text-stroke:0;">hide</div>
<div class="r" style="left:984px;top:88px;width:25px;height:20px;background:#9fb5cb;"></div>
<div class="r" style="left:984px;top:108px;width:25px;height:2px;background:#eef2f7;"></div>
<div class="t " style="left:985.8px;top:98.6px;font-size:7.3px;color:#1a1a1a;-webkit-text-stroke:0;text-decoration:underline;">show</div>
<div class="r" style="left:984px;top:110px;width:25px;height:20px;background:#9fb5cb;"></div>
<div class="r" style="left:984px;top:130px;width:25px;height:2px;background:#eef2f7;"></div>
<div class="t " style="left:985.8px;top:120.60000000000001px;font-size:7.3px;color:#1a1a1a;-webkit-text-stroke:0;text-decoration:underline;">show</div>
<div class="r" style="left:984px;top:132px;width:25px;height:20px;background:#9fb5cb;"></div>
<div class="r" style="left:984px;top:152px;width:25px;height:2px;background:#eef2f7;"></div>
<div class="t " style="left:985.8px;top:142.60000000000002px;font-size:7.3px;color:#1a1a1a;-webkit-text-stroke:0;text-decoration:underline;">show</div>
<div class="r" style="left:984px;top:154px;width:25px;height:21px;background:#9fb5cb;"></div>
<div class="r" style="left:984px;top:175px;width:25px;height:1px;background:#eef2f7;"></div>
<div class="t " style="left:985.8px;top:165.60000000000002px;font-size:7.3px;color:#1a1a1a;-webkit-text-stroke:0;text-decoration:underline;">show</div>
<div class="r" style="left:984px;top:176px;width:25px;height:20px;background:#fdf5d5;"></div>
<div class="t " style="left:989px;top:186.8px;font-size:7.3px;color:#1a1a1a;-webkit-text-stroke:0;">hide</div>
<div class="r" style="left:984px;top:196px;width:25px;height:16px;background:#f7f7f7;border-top:1px solid #ddd;border-bottom:1px solid #ddd;box-sizing:border-box"></div>
<div class="r" style="left:984px;top:214px;width:25px;height:19px;background:#fdf5d5;"></div>
<div class="t " style="left:989px;top:224.3px;font-size:7.3px;color:#1a1a1a;-webkit-text-stroke:0;">hide</div>
<div class="r" style="left:984px;top:233px;width:25px;height:15px;background:#f7f7f7;border-top:1px solid #ddd;box-sizing:border-box"></div>
<div class="r" style="left:232px;top:30px;width:752px;height:377px;background:#fff;"></div>
<div class="r" style="left:231px;top:30px;width:1px;height:377px;background:#c4c4c4;"></div>
<div class="r" style="left:232px;top:30px;width:752px;height:1px;background:#e8e8e8;"></div>
<div class="r" style="left:232px;top:51px;width:752px;height:1px;background:#ebebeb;"></div>
<div class="r" style="left:984px;top:31px;width:1px;height:376px;background:#d0d0d0;"></div>
<div class="ic" style="left:237px;top:36px;width:11px;height:11px"><svg width="11" height="11" viewBox="0 0 11 11"><path d="M1.800 1.200h8l-1.200 1.200v7.200H.6c1.200-.3 1.200-1 1.200-1.600z" fill="#f6efc6" stroke="#a39c78" stroke-width=".7"/><path d="M9.800 1.200c.9-.6 1-1 .2-.9" fill="none" stroke="#c9a63c" stroke-width=".6"/><path d="M3.600 3.200h3.400M3.600 4.800h3.400M3.600 6.400h3.400" stroke="#8d8a7c" stroke-width=".7"/></svg></div>
<div class="t " style="left:250.4px;top:35.2px;font-size:8px;color:#979797;-webkit-text-stroke:0;">Group Policy Management Editor</div>
<div class="r" style="left:905px;top:40px;width:6px;height:1px;background:#a4a4a4;"></div>
<div class="r" style="left:935px;top:37px;width:7px;height:7px;background:transparent;border:1px solid #b0b0b0;box-sizing:border-box"></div>
<svg class="ic" style="left:965px;top:37px" width="7" height="7" viewBox="0 0 7 7"><path d="M.3 .3l6.400 6.400M6.700 .3L.3 6.700" stroke="#969696" stroke-width=".8"/></svg>
<div class="t " style="left:238px;top:52.5px;font-size:8px;color:#000;">File</div>
<div class="t " style="left:261px;top:52.5px;font-size:8px;color:#000;">Action</div>
<div class="t " style="left:295px;top:52.5px;font-size:8px;color:#000;">View</div>
<div class="t " style="left:322.5px;top:52.5px;font-size:8px;color:#000;">Help</div>
<div class="r" style="left:232px;top:66px;width:752px;height:1px;background:#dedede;"></div>
<svg class="ic" style="left:235px;top:69.8px" width="11" height="10" viewBox="0 0 11 10"><path d="M.2 5L5.200 .3v2.500h5.600v4.400H5.200v2.500z" fill="#2b9fe6"/></svg>
<svg class="ic" style="left:250.300px;top:69.8px" width="11" height="10" viewBox="0 0 11 10"><path d="M10.800 5L5.800 .3v2.500H.2v4.400h5.600v2.500z" fill="#868686"/></svg>
<div class="r" style="left:265.2px;top:68.7px;width:0.9px;height:11.5px;background:#8f8f8f;"></div>
<svg class="ic" style="left:271.500px;top:69.3px" width="10" height="11" viewBox="0 0 10 11"><path d="M.5 3.500h3l.8 1h5.200v6H.5z" fill="#f3d57a" stroke="#d8b04a" stroke-width=".5"/><path d="M2.500 7.500C3 5 4.500 3.500 6.500 2.800L5.800 1.200 9.300 2.200 7.800 5.200 7.200 3.900C5.500 4.600 4.200 5.800 3.800 7.800z" fill="#3fae2a"/></svg>
<div class="r" style="left:284.7px;top:67px;width:15.3px;height:13.8px;background:#cde6f9;border:.8px solid #9fd0f5;box-sizing:border-box"></div>
<svg class="ic" style="left:287.3px;top:71.0px" width="11" height="9" viewBox="0 0 11 9"><rect x=".4" y=".4" width="10.200" height="8.200" fill="#e9edf2" stroke="#7a8390" stroke-width=".8"/><rect x=".4" y=".4" width="10.200" height="2" fill="#8b95a3"/><path d="M3.800 2.400v6.200" stroke="#7a8390" stroke-width=".7"/><path d="M7.800 3.800v3.800L5.200 5.700z" fill="#2faa2a"/></svg>
<div class="r" style="left:301.6px;top:68.7px;width:0.9px;height:11.5px;background:#8f8f8f;"></div>
<svg class="ic" style="left:307px;top:70.3px" width="11" height="9" viewBox="0 0 11 9"><path d="M1.200 .8L9.800 8.200M9.800 .8L1.200 8.200" stroke="#1a1a1a" stroke-width="2.600" stroke-linecap="round"/></svg>
<svg class="ic" style="left:322.500px;top:69.8px" width="10" height="10" viewBox="0 0 10 10"><rect x=".5" y=".5" width="9" height="9" fill="#e6ebf1" stroke="#9aa3b0" stroke-width=".7"/><rect x="1.800" y="1.800" width="3" height="4.500" fill="#c3d3e6"/><path d="M5.600 2.500h2.800M5.600 4h2.800M5.600 5.500h2.800" stroke="#a7b4c4" stroke-width=".7"/><rect x="1.500" y="7.500" width="7" height="1.200" fill="#9fc4e8"/></svg>
<svg class="ic" style="left:338.300px;top:69.3px" width="12" height="11" viewBox="0 0 12 11"><path d="M.5 .5h6l1.500 1.500v8.500H.5z" fill="#fbf6dc" stroke="#a9a58c" stroke-width=".7"/><path d="M1.800 3h4.500M1.800 5h4.500M1.800 7h3" stroke="#8f8c78" stroke-width=".7"/><path d="M5 6.500h3.500V5l3 2.800-3 2.800V9H5z" fill="#3cb52e"/></svg>
<div class="r" style="left:353.2px;top:68.7px;width:0.9px;height:11.5px;background:#8f8f8f;"></div>
<svg class="ic" style="left:359.700px;top:69.0px" width="9" height="11" viewBox="0 0 9 11"><rect x=".3" y=".3" width="8.400" height="10.400" fill="#2a4fc0" stroke="#1a2f80" stroke-width=".6"/><rect x=".3" y=".3" width="1.600" height="10.400" fill="#7f9be0"/></svg>
<div class="t " style="left:362.2px;top:68.1px;font-size:9px;color:#fff;font-weight:700;-webkit-text-stroke:0;">?</div>
<svg class="ic" style="left:374.2px;top:72.0px" width="11" height="9" viewBox="0 0 11 9"><rect x=".4" y=".4" width="10.200" height="8.200" fill="#e9edf2" stroke="#7a8390" stroke-width=".8"/><rect x=".4" y=".4" width="10.200" height="2" fill="#8b95a3"/><path d="M3.800 2.400v6.200" stroke="#7a8390" stroke-width=".7"/><path d="M7.800 3.800v3.800L5.200 5.700z" fill="#2faa2a"/></svg>
<div class="r" style="left:232px;top:82px;width:752px;height:4px;background:#f0f0f0;"></div>
<div class="r" style="left:232px;top:86px;width:752px;height:1px;background:#a8a8a8;"></div>
<div class="r" style="left:232px;top:391px;width:752px;height:16px;background:#f0f0f0;"></div>
<div class="r" style="left:234px;top:391px;width:750px;height:1px;background:#a3a6ab;"></div>
<div class="r" style="left:234px;top:87px;width:216px;height:304px;background:#fff;"></div>
<div class="r" style="left:234px;top:87px;width:205px;height:292px;overflow:hidden">
<div class="r" style="left:-234px;top:-87px;width:1022px;height:478px">
<svg class="ic" style="left:237px;top:92px" width="7" height="5" viewBox="0 0 7 5"><path d="M.7 1l2.800 2.800L6.300 1" fill="none" stroke="#404040" stroke-width="1.350"/></svg>
<div class="ic" style="left:248px;top:88px;width:11px;height:11px"><svg width="11" height="11" viewBox="0 0 11 11"><rect x="2.6" y="1" width="7.4" height="5.6" fill="#3f6fc4" stroke="#6d7686" stroke-width=".8"/><path d="M3.4 1.8l3 2.4-3 1.6z" fill="#9fc2f2"/><rect x=".8" y="4" width="3.2" height="6" fill="#b9bfc8" stroke="#6d7686" stroke-width=".5"/><rect x="4.6" y="7.4" width="4.6" height="1.4" fill="#9aa2ae"/><rect x="1.6" y="6" width="1.4" height=".8" fill="#e14b3a"/></svg></div>
<div class="t " style="left:261.8px;top:87.5px;font-size:8.223px;color:#1a1a1a;">Computer Configuration</div>
<svg class="ic" style="left:250px;top:104px" width="7" height="5" viewBox="0 0 7 5"><path d="M.7 1l2.800 2.800L6.300 1" fill="none" stroke="#404040" stroke-width="1.350"/></svg>
<div class="ic" style="left:260px;top:100px;width:11px;height:11px"><svg width="11" height="11" viewBox="0 0 11 11"><path d="M.6 2.300h5.600l.9-1h2.700v1h.4v7.500H.6z" fill="#f6e7a3" stroke="#e4cb74" stroke-width=".5"/><path d="M7.200 1.500h2.400v.8H6.600z" fill="#fff"/><circle cx="8.600" cy="1.700" r=".5" fill="#5a9ad8"/><path d="M.6 9.500h9.600" stroke="#dfc060" stroke-width=".7"/></svg></div>
<div class="t " style="left:274.467px;top:99.5px;font-size:7.76px;color:#1a1a1a;letter-spacing:-0.049px;">Policies</div>
<svg class="ic" style="left:264px;top:114px" width="5" height="7" viewBox="0 0 5 7"><path d="M1 .7l2.800 2.800L1 6.300" fill="none" stroke="#a4a4a4" stroke-width="1.250"/></svg>
<div class="ic" style="left:273px;top:112px;width:11px;height:11px"><svg width="11" height="11" viewBox="0 0 11 11"><path d="M.6 2.300h5.600l.9-1h2.700v1h.4v7.500H.6z" fill="#f6e7a3" stroke="#e4cb74" stroke-width=".5"/><path d="M7.200 1.500h2.400v.8H6.600z" fill="#fff"/><circle cx="8.600" cy="1.700" r=".5" fill="#5a9ad8"/><path d="M.6 9.500h9.600" stroke="#dfc060" stroke-width=".7"/></svg></div>
<div class="t " style="left:287.134px;top:111.5px;font-size:7.76px;color:#1a1a1a;letter-spacing:-0.014px;">Software Settings</div>
<svg class="ic" style="left:262px;top:128px" width="7" height="5" viewBox="0 0 7 5"><path d="M.7 1l2.800 2.800L6.300 1" fill="none" stroke="#404040" stroke-width="1.350"/></svg>
<div class="ic" style="left:273px;top:124px;width:11px;height:11px"><svg width="11" height="11" viewBox="0 0 11 11"><path d="M.6 2.300h5.600l.9-1h2.700v1h.4v7.500H.6z" fill="#f6e7a3" stroke="#e4cb74" stroke-width=".5"/><path d="M7.200 1.500h2.400v.8H6.600z" fill="#fff"/><circle cx="8.600" cy="1.700" r=".5" fill="#5a9ad8"/><path d="M.6 9.500h9.600" stroke="#dfc060" stroke-width=".7"/></svg></div>
<div class="t " style="left:287.134px;top:123.5px;font-size:7.876px;color:#1a1a1a;">Windows Settings</div>
<svg class="ic" style="left:276px;top:138px" width="5" height="7" viewBox="0 0 5 7"><path d="M1 .7l2.800 2.800L1 6.300" fill="none" stroke="#a4a4a4" stroke-width="1.250"/></svg>
<div class="ic" style="left:286px;top:136px;width:11px;height:11px"><svg width="11" height="11" viewBox="0 0 11 11"><path d="M.6 2.300h5.600l.9-1h2.700v1h.4v7.500H.6z" fill="#f6e7a3" stroke="#e4cb74" stroke-width=".5"/><path d="M7.200 1.500h2.400v.8H6.600z" fill="#fff"/><circle cx="8.600" cy="1.700" r=".5" fill="#5a9ad8"/><path d="M.6 9.500h9.600" stroke="#dfc060" stroke-width=".7"/></svg></div>
<div class="t " style="left:299.801px;top:135.5px;font-size:7.913px;color:#1a1a1a;">Name Resolution Policy</div>
<div class="ic" style="left:286px;top:148px;width:11px;height:11px"><svg width="11" height="11" viewBox="0 0 11 11"><path d="M2.2 1h6.6v9H2.2z" fill="#f6f6f6" stroke="#9a9a9a" stroke-width=".6"/><path d="M3.4 3h4.2M3.4 4.6h4.2M3.4 6.2h4.2M3.4 7.8h2.6" stroke="#a8a8a8" stroke-width=".6"/><path d="M1.4 1.6c1-.9 1.6-.9 1.6 0M8 10c1 .6 1.8 0 1.600-.8" fill="none" stroke="#9a9a9a" stroke-width=".6"/></svg></div>
<div class="t " style="left:299.801px;top:147.5px;font-size:7.983px;color:#1a1a1a;">Scripts (Startup/Shutdown)</div>
<svg class="ic" style="left:276px;top:162px" width="5" height="7" viewBox="0 0 5 7"><path d="M1 .7l2.800 2.800L1 6.300" fill="none" stroke="#a4a4a4" stroke-width="1.250"/></svg>
<div class="ic" style="left:286px;top:160px;width:11px;height:11px"><svg width="11" height="11" viewBox="0 0 11 11"><rect x="2.6" y="1.6" width="5.8" height="3" fill="#f4f4f4" stroke="#8a8a8a" stroke-width=".5"/><rect x=".8" y="4" width="9.4" height="4" rx=".6" fill="#6f747c" stroke="#4a4e55" stroke-width=".5"/><rect x="2.6" y="6.6" width="5.800" height="3" fill="#e8e8e8" stroke="#8a8a8a" stroke-width=".5"/></svg></div>
<div class="t " style="left:299.801px;top:159.5px;font-size:7.788px;color:#1a1a1a;">Deployed Printers</div>
<svg class="ic" style="left:275px;top:176px" width="7" height="5" viewBox="0 0 7 5"><path d="M.7 1l2.800 2.800L6.300 1" fill="none" stroke="#404040" stroke-width="1.350"/></svg>
<div class="ic" style="left:286px;top:172px;width:11px;height:11px"><svg width="11" height="11" viewBox="0 0 11 11"><rect x="1.600" y=".8" width="5.600" height="9" fill="#c9ced6" stroke="#7b8492" stroke-width=".6"/><path d="M2.600 2.400h3.600M2.600 4h3.600" stroke="#8b94a2" stroke-width=".7"/><rect x="5" y="6.200" width="5" height="4" rx=".5" fill="#e0a422" stroke="#a87410" stroke-width=".4"/><path d="M6.100 6.200V5.200a1.400 1.400 0 0 1 2.800 0v1" fill="none" stroke="#8a8a8a" stroke-width=".7"/></svg></div>
<div class="t " style="left:299.801px;top:171.5px;font-size:7.76px;color:#1a1a1a;letter-spacing:-0.02px;">Security Settings</div>
<svg class="ic" style="left:289px;top:186px" width="5" height="7" viewBox="0 0 5 7"><path d="M1 .7l2.800 2.800L1 6.300" fill="none" stroke="#a4a4a4" stroke-width="1.250"/></svg>
<div class="ic" style="left:298px;top:184px;width:11px;height:11px"><svg width="11" height="11" viewBox="0 0 11 11"><rect x="3.400" y=".8" width="5.600" height="9.400" fill="#c3c8d0" stroke="#7b8492" stroke-width=".6"/><path d="M4.400 2.400h3.600M4.400 4h3.600M4.400 5.600h3.600" stroke="#8b94a2" stroke-width=".7"/><rect x="1" y="5.600" width="3.600" height="4.600" fill="#f3ecc4" stroke="#a9a58c" stroke-width=".5"/><rect x="5" y="8.200" width="2.200" height=".9" fill="#55b64a"/></svg></div>
<div class="t " style="left:312.468px;top:183.5px;font-size:7.987px;color:#1a1a1a;">Account Policies</div>
<svg class="ic" style="left:288px;top:200px" width="7" height="5" viewBox="0 0 7 5"><path d="M.7 1l2.800 2.800L6.300 1" fill="none" stroke="#404040" stroke-width="1.350"/></svg>
<div class="ic" style="left:298px;top:196px;width:11px;height:11px"><svg width="11" height="11" viewBox="0 0 11 11"><rect x="3.400" y=".8" width="5.600" height="9.400" fill="#c3c8d0" stroke="#7b8492" stroke-width=".6"/><path d="M4.400 2.400h3.600M4.400 4h3.600M4.400 5.600h3.600" stroke="#8b94a2" stroke-width=".7"/><rect x="1" y="5.600" width="3.600" height="4.600" fill="#f3ecc4" stroke="#a9a58c" stroke-width=".5"/><rect x="5" y="8.200" width="2.200" height=".9" fill="#55b64a"/></svg></div>
<div class="t " style="left:312.468px;top:195.5px;font-size:7.769px;color:#1a1a1a;">Local Policies</div>
<svg class="ic" style="left:302px;top:210px" width="5" height="7" viewBox="0 0 5 7"><path d="M1 .7l2.800 2.800L1 6.300" fill="none" stroke="#a4a4a4" stroke-width="1.250"/></svg>
<div class="ic" style="left:311px;top:208px;width:11px;height:11px"><svg width="11" height="11" viewBox="0 0 11 11"><rect x="3.400" y=".8" width="5.600" height="9.400" fill="#c3c8d0" stroke="#7b8492" stroke-width=".6"/><path d="M4.400 2.400h3.600M4.400 4h3.600M4.400 5.600h3.600" stroke="#8b94a2" stroke-width=".7"/><rect x="1" y="5.600" width="3.600" height="4.600" fill="#f3ecc4" stroke="#a9a58c" stroke-width=".5"/><rect x="5" y="8.200" width="2.200" height=".9" fill="#55b64a"/></svg></div>
<div class="t " style="left:325.135px;top:207.5px;font-size:8.192px;color:#1a1a1a;">Audit Policy</div>
<div class="r" style="left:323px;top:220px;width:88px;height:12px;background:#e2e2e2;"></div>
<svg class="ic" style="left:302px;top:222px" width="5" height="7" viewBox="0 0 5 7"><path d="M1 .7l2.800 2.800L1 6.300" fill="none" stroke="#a4a4a4" stroke-width="1.250"/></svg>
<div class="ic" style="left:311px;top:220px;width:11px;height:11px"><svg width="11" height="11" viewBox="0 0 11 11"><rect x="3.400" y=".8" width="5.600" height="9.400" fill="#c3c8d0" stroke="#7b8492" stroke-width=".6"/><path d="M4.400 2.400h3.600M4.400 4h3.600M4.400 5.600h3.600" stroke="#8b94a2" stroke-width=".7"/><rect x="1" y="5.600" width="3.600" height="4.600" fill="#f3ecc4" stroke="#a9a58c" stroke-width=".5"/><rect x="5" y="8.200" width="2.200" height=".9" fill="#55b64a"/></svg></div>
<div class="t " style="left:325.135px;top:219.5px;font-size:7.872px;color:#1a1a1a;">User Rights Assignment</div>
<svg class="ic" style="left:302px;top:234px" width="5" height="7" viewBox="0 0 5 7"><path d="M1 .7l2.800 2.800L1 6.300" fill="none" stroke="#a4a4a4" stroke-width="1.250"/></svg>
<div class="ic" style="left:311px;top:232px;width:11px;height:11px"><svg width="11" height="11" viewBox="0 0 11 11"><rect x="3.400" y=".8" width="5.600" height="9.400" fill="#c3c8d0" stroke="#7b8492" stroke-width=".6"/><path d="M4.400 2.400h3.600M4.400 4h3.600M4.400 5.600h3.600" stroke="#8b94a2" stroke-width=".7"/><rect x="1" y="5.600" width="3.600" height="4.600" fill="#f3ecc4" stroke="#a9a58c" stroke-width=".5"/><rect x="5" y="8.200" width="2.200" height=".9" fill="#55b64a"/></svg></div>
<div class="t " style="left:325.135px;top:231.5px;font-size:7.906px;color:#1a1a1a;">Security Options</div>
<svg class="ic" style="left:289px;top:246px" width="5" height="7" viewBox="0 0 5 7"><path d="M1 .7l2.800 2.800L1 6.300" fill="none" stroke="#a4a4a4" stroke-width="1.250"/></svg>
<div class="ic" style="left:298px;top:244px;width:11px;height:11px"><svg width="11" height="11" viewBox="0 0 11 11"><rect x="3.400" y=".8" width="5.600" height="9.400" fill="#c3c8d0" stroke="#7b8492" stroke-width=".6"/><path d="M4.400 2.400h3.600M4.400 4h3.600M4.400 5.600h3.600" stroke="#8b94a2" stroke-width=".7"/><rect x="1" y="5.600" width="3.600" height="4.600" fill="#f3ecc4" stroke="#a9a58c" stroke-width=".5"/><rect x="5" y="8.200" width="2.200" height=".9" fill="#55b64a"/></svg></div>
<div class="t " style="left:312.468px;top:243.5px;font-size:7.76px;color:#1a1a1a;letter-spacing:-0.043px;">Event Log</div>
<svg class="ic" style="left:289px;top:258px" width="5" height="7" viewBox="0 0 5 7"><path d="M1 .7l2.800 2.800L1 6.300" fill="none" stroke="#a4a4a4" stroke-width="1.250"/></svg>
<div class="ic" style="left:298px;top:256px;width:11px;height:11px"><svg width="11" height="11" viewBox="0 0 11 11"><path d="M.6 2.300h5.600l.9-1h2.700v1h.4v7.500H.6z" fill="#f6e7a3" stroke="#e4cb74" stroke-width=".5"/><path d="M.6 9.500h9.600" stroke="#dfc060" stroke-width=".7"/><rect x="5.200" y="6" width="4.800" height="4.200" rx=".5" fill="#e0a422" stroke="#a87410" stroke-width=".4"/><path d="M6.300 6V5a1.300 1.300 0 0 1 2.600 0v1" fill="none" stroke="#8a8a8a" stroke-width=".7"/></svg></div>
<div class="t " style="left:312.468px;top:255.5px;font-size:7.76px;color:#1a1a1a;letter-spacing:-0.052px;">Restricted Groups</div>
<svg class="ic" style="left:289px;top:270px" width="5" height="7" viewBox="0 0 5 7"><path d="M1 .7l2.800 2.800L1 6.300" fill="none" stroke="#a4a4a4" stroke-width="1.250"/></svg>
<div class="ic" style="left:298px;top:268px;width:11px;height:11px"><svg width="11" height="11" viewBox="0 0 11 11"><path d="M.6 2.300h5.600l.9-1h2.700v1h.4v7.500H.6z" fill="#f6e7a3" stroke="#e4cb74" stroke-width=".5"/><path d="M.6 9.500h9.600" stroke="#dfc060" stroke-width=".7"/><rect x="5.200" y="6" width="4.800" height="4.200" rx=".5" fill="#e0a422" stroke="#a87410" stroke-width=".4"/><path d="M6.300 6V5a1.300 1.300 0 0 1 2.600 0v1" fill="none" stroke="#8a8a8a" stroke-width=".7"/></svg></div>
<div class="t " style="left:312.468px;top:267.5px;font-size:7.76px;color:#1a1a1a;letter-spacing:-0.177px;">System Services</div>
<svg class="ic" style="left:289px;top:282px" width="5" height="7" viewBox="0 0 5 7"><path d="M1 .7l2.800 2.800L1 6.300" fill="none" stroke="#a4a4a4" stroke-width="1.250"/></svg>
<div class="ic" style="left:298px;top:280px;width:11px;height:11px"><svg width="11" height="11" viewBox="0 0 11 11"><path d="M.6 2.300h5.600l.9-1h2.700v1h.4v7.500H.6z" fill="#f6e7a3" stroke="#e4cb74" stroke-width=".5"/><path d="M.6 9.500h9.600" stroke="#dfc060" stroke-width=".7"/><rect x="5.200" y="6" width="4.800" height="4.200" rx=".5" fill="#e0a422" stroke="#a87410" stroke-width=".4"/><path d="M6.300 6V5a1.300 1.300 0 0 1 2.600 0v1" fill="none" stroke="#8a8a8a" stroke-width=".7"/></svg></div>
<div class="t " style="left:312.468px;top:279.5px;font-size:7.76px;color:#1a1a1a;letter-spacing:-0.137px;">Registry</div>
<svg class="ic" style="left:289px;top:294px" width="5" height="7" viewBox="0 0 5 7"><path d="M1 .7l2.800 2.800L1 6.300" fill="none" stroke="#a4a4a4" stroke-width="1.250"/></svg>
<div class="ic" style="left:298px;top:292px;width:11px;height:11px"><svg width="11" height="11" viewBox="0 0 11 11"><path d="M.6 2.300h5.600l.9-1h2.700v1h.4v7.500H.6z" fill="#f6e7a3" stroke="#e4cb74" stroke-width=".5"/><path d="M.6 9.500h9.600" stroke="#dfc060" stroke-width=".7"/><rect x="5.200" y="6" width="4.800" height="4.200" rx=".5" fill="#e0a422" stroke="#a87410" stroke-width=".4"/><path d="M6.300 6V5a1.300 1.300 0 0 1 2.600 0v1" fill="none" stroke="#8a8a8a" stroke-width=".7"/></svg></div>
<div class="t " style="left:312.468px;top:291.5px;font-size:7.76px;color:#1a1a1a;letter-spacing:-0.133px;">File System</div>
<svg class="ic" style="left:289px;top:306px" width="5" height="7" viewBox="0 0 5 7"><path d="M1 .7l2.800 2.800L1 6.300" fill="none" stroke="#a4a4a4" stroke-width="1.250"/></svg>
<div class="ic" style="left:298px;top:304px;width:11px;height:11px"><svg width="11" height="11" viewBox="0 0 11 11"><rect x="1" y="1.400" width="6.400" height="8.400" fill="#dfe6f2" stroke="#6d7f9c" stroke-width=".6"/><path d="M2.200 3h4M2.200 4.600h4M2.200 6.200h4" stroke="#7f95ba" stroke-width=".6"/><path d="M6.400 9.600L10 2.200" stroke="#5a6a84" stroke-width="1"/></svg></div>
<div class="t " style="left:312.468px;top:303.5px;font-size:7.76px;color:#1a1a1a;letter-spacing:-0.108px;">Wired Network (IEEE 802.3) Policies</div>
<svg class="ic" style="left:289px;top:318px" width="5" height="7" viewBox="0 0 5 7"><path d="M1 .7l2.800 2.800L1 6.300" fill="none" stroke="#a4a4a4" stroke-width="1.250"/></svg>
<div class="ic" style="left:298px;top:316px;width:11px;height:11px"><svg width="11" height="11" viewBox="0 0 11 11"><path d="M.6 2.300h5.600l.9-1h2.700v1h.4v7.500H.6z" fill="#f6e7a3" stroke="#e4cb74" stroke-width=".5"/><path d="M7.200 1.500h2.400v.8H6.600z" fill="#fff"/><circle cx="8.600" cy="1.700" r=".5" fill="#5a9ad8"/><path d="M.6 9.500h9.600" stroke="#dfc060" stroke-width=".7"/></svg></div>
<div class="t " style="left:312.468px;top:315.5px;font-size:7.903px;color:#1a1a1a;">Windows Firewall with Advanced Se</div>
<div class="ic" style="left:298px;top:328px;width:11px;height:11px"><svg width="11" height="11" viewBox="0 0 11 11"><path d="M.6 2.300h5.600l.9-1h2.700v1h.4v7.500H.6z" fill="#f6e7a3" stroke="#e4cb74" stroke-width=".5"/><path d="M7.200 1.500h2.400v.8H6.600z" fill="#fff"/><circle cx="8.600" cy="1.700" r=".5" fill="#5a9ad8"/><path d="M.6 9.500h9.600" stroke="#dfc060" stroke-width=".7"/></svg></div>
<div class="t " style="left:312.468px;top:327.5px;font-size:7.866px;color:#1a1a1a;">Network List Manager Policies</div>
<svg class="ic" style="left:289px;top:342px" width="5" height="7" viewBox="0 0 5 7"><path d="M1 .7l2.800 2.800L1 6.300" fill="none" stroke="#a4a4a4" stroke-width="1.250"/></svg>
<div class="ic" style="left:298px;top:340px;width:11px;height:11px"><svg width="11" height="11" viewBox="0 0 11 11"><rect x="1" y="1.400" width="6.400" height="8.400" fill="#dfe6f2" stroke="#6d7f9c" stroke-width=".6"/><path d="M2 7.600l2-2.400 1.600 1.400L9.800 2" fill="none" stroke="#3fae3f" stroke-width="1.200"/></svg></div>
<div class="t " style="left:312.468px;top:339.5px;font-size:7.76px;color:#1a1a1a;letter-spacing:-0.122px;">Wireless Network (IEEE 802.11) Polic</div>
<svg class="ic" style="left:289px;top:354px" width="5" height="7" viewBox="0 0 5 7"><path d="M1 .7l2.800 2.800L1 6.300" fill="none" stroke="#a4a4a4" stroke-width="1.250"/></svg>
<div class="ic" style="left:298px;top:352px;width:11px;height:11px"><svg width="11" height="11" viewBox="0 0 11 11"><path d="M.6 2.300h5.600l.9-1h2.700v1h.4v7.500H.6z" fill="#f6e7a3" stroke="#e4cb74" stroke-width=".5"/><path d="M7.200 1.500h2.400v.8H6.600z" fill="#fff"/><circle cx="8.600" cy="1.700" r=".5" fill="#5a9ad8"/><path d="M.6 9.500h9.600" stroke="#dfc060" stroke-width=".7"/></svg></div>
<div class="t " style="left:312.468px;top:351.5px;font-size:7.76px;color:#1a1a1a;letter-spacing:-0.025px;">Public Key Policies</div>
<svg class="ic" style="left:289px;top:366px" width="5" height="7" viewBox="0 0 5 7"><path d="M1 .7l2.800 2.800L1 6.300" fill="none" stroke="#a4a4a4" stroke-width="1.250"/></svg>
<div class="ic" style="left:298px;top:364px;width:11px;height:11px"><svg width="11" height="11" viewBox="0 0 11 11"><path d="M.6 2.300h5.600l.9-1h2.700v1h.4v7.500H.6z" fill="#f6e7a3" stroke="#e4cb74" stroke-width=".5"/><path d="M7.200 1.500h2.400v.8H6.600z" fill="#fff"/><circle cx="8.600" cy="1.700" r=".5" fill="#5a9ad8"/><path d="M.6 9.500h9.600" stroke="#dfc060" stroke-width=".7"/></svg></div>
<div class="t " style="left:312.468px;top:363.5px;font-size:7.781px;color:#1a1a1a;">Software Restriction Policies</div>
<svg class="ic" style="left:289px;top:378px" width="5" height="7" viewBox="0 0 5 7"><path d="M1 .7l2.800 2.800L1 6.300" fill="none" stroke="#a4a4a4" stroke-width="1.250"/></svg>
<div class="ic" style="left:298px;top:376px;width:11px;height:11px"><svg width="11" height="11" viewBox="0 0 11 11"><path d="M.6 2.300h5.600l.9-1h2.700v1h.4v7.500H.6z" fill="#f6e7a3" stroke="#e4cb74" stroke-width=".5"/><path d="M7.200 1.500h2.400v.8H6.600z" fill="#fff"/><circle cx="8.600" cy="1.700" r=".5" fill="#5a9ad8"/><path d="M.6 9.500h9.600" stroke="#dfc060" stroke-width=".7"/></svg></div>
<div class="t " style="left:312.468px;top:375.5px;font-size:7.76px;color:#1a1a1a;letter-spacing:-0.001px;">Application Control Policies</div>
</div></div>
<div class="r" style="left:439px;top:87px;width:11px;height:292px;background:#f0f0f0;"></div>
<div class="r" style="left:439px;top:107px;width:10px;height:187px;background:#cdcdcd;"></div>
<svg class="ic" style="left:440.700px;top:91.200px" width="7" height="5" viewBox="0 0 7 5"><path d="M.7 4l2.800-2.800L6.300 4" fill="none" stroke="#505050" stroke-width="1.200"/></svg>
<svg class="ic" style="left:440.700px;top:371px" width="7" height="5" viewBox="0 0 7 5"><path d="M.7 1l2.800 2.800L6.300 1" fill="none" stroke="#505050" stroke-width="1.200"/></svg>
<div class="r" style="left:234px;top:379px;width:216px;height:12px;background:#f0f0f0;"></div>
<div class="r" style="left:245px;top:380px;width:134px;height:11px;background:#cdcdcd;"></div>
<svg class="ic" style="left:235.500px;top:381.200px" width="5" height="7" viewBox="0 0 5 7"><path d="M4 .7L1.200 3.500 4 6.300" fill="none" stroke="#505050" stroke-width="1.200"/></svg>
<svg class="ic" style="left:430.500px;top:381.200px" width="5" height="7" viewBox="0 0 5 7"><path d="M1 .7l2.800 2.800L1 6.300" fill="none" stroke="#505050" stroke-width="1.200"/></svg>
<div class="r" style="left:451px;top:86px;width:2px;height:306px;background:#f4f4f4;"></div>
<div class="r" style="left:450px;top:86px;width:1px;height:306px;background:#a3a6ab;"></div>
<div class="r" style="left:453px;top:86px;width:1px;height:306px;background:#a3a6ab;"></div>
<div class="r" style="left:233px;top:86px;width:1px;height:306px;background:#a3a6ab;"></div>
<div class="r" style="left:454px;top:87px;width:530px;height:304px;background:#fff;"></div>
<div class="t " style="left:457.5px;top:89.5px;font-size:8.1px;color:#1a1a1a;">Policy</div>
<svg class="ic" style="left:568px;top:87.500px" width="6" height="4" viewBox="0 0 6 4"><path d="M.5 3.500L3 1l2.500 2.500" fill="none" stroke="#9a9a9a" stroke-width=".7"/></svg>
<div class="r" style="left:454px;top:87px;width:530px;height:304px;overflow:hidden">
<div class="r" style="left:-454px;top:-87px;width:1022px;height:478px">
<div class="ic" style="left:456.5px;top:104.1px;width:11px;height:11px"><svg width="11" height="11" viewBox="0 0 11 11"><path d="M1.300 1h5.400l2 2v7.400H1.300z" fill="#eef0f3" stroke="#9aa0a9" stroke-width=".6"/><path d="M6.700 1v2h2" fill="#fff" stroke="#9aa0a9" stroke-width=".5"/><path d="M2.600 3.200h2.800M2.600 4.800h4.600" stroke="#aeb4bd" stroke-width=".7"/><rect x="2.400" y="6.200" width="3.600" height="2.600" fill="#c3c9d2"/><circle cx="7.300" cy="8" r="1.500" fill="#dfe3e8" stroke="#8f96a0" stroke-width=".5"/><path d="M8.300 9l1 1.100" stroke="#8f96a0" stroke-width=".6"/></svg></div>
<div class="t " style="left:469.2px;top:103.6px;font-size:7.76px;color:#1a1a1a;letter-spacing:-0.01px;">Access Credential Manager as a trusted caller</div>
<div class="ic" style="left:456.5px;top:116.767px;width:11px;height:11px"><svg width="11" height="11" viewBox="0 0 11 11"><path d="M1.300 1h5.400l2 2v7.400H1.300z" fill="#eef0f3" stroke="#9aa0a9" stroke-width=".6"/><path d="M6.700 1v2h2" fill="#fff" stroke="#9aa0a9" stroke-width=".5"/><path d="M2.600 3.200h2.800M2.600 4.800h4.600" stroke="#aeb4bd" stroke-width=".7"/><rect x="2.400" y="6.200" width="3.600" height="2.600" fill="#c3c9d2"/><circle cx="7.300" cy="8" r="1.500" fill="#dfe3e8" stroke="#8f96a0" stroke-width=".5"/><path d="M8.300 9l1 1.100" stroke="#8f96a0" stroke-width=".6"/></svg></div>
<div class="t " style="left:469.2px;top:116.267px;font-size:8.022px;color:#1a1a1a;">Access this computer from the network</div>
<div class="ic" style="left:456.5px;top:129.434px;width:11px;height:11px"><svg width="11" height="11" viewBox="0 0 11 11"><path d="M1.300 1h5.400l2 2v7.400H1.300z" fill="#eef0f3" stroke="#9aa0a9" stroke-width=".6"/><path d="M6.700 1v2h2" fill="#fff" stroke="#9aa0a9" stroke-width=".5"/><path d="M2.600 3.200h2.800M2.600 4.800h4.600" stroke="#aeb4bd" stroke-width=".7"/><rect x="2.400" y="6.200" width="3.600" height="2.600" fill="#c3c9d2"/><circle cx="7.300" cy="8" r="1.500" fill="#dfe3e8" stroke="#8f96a0" stroke-width=".5"/><path d="M8.300 9l1 1.100" stroke="#8f96a0" stroke-width=".6"/></svg></div>
<div class="t " style="left:469.2px;top:128.934px;font-size:7.928px;color:#1a1a1a;">Act as part of the operating system</div>
<div class="ic" style="left:456.5px;top:142.101px;width:11px;height:11px"><svg width="11" height="11" viewBox="0 0 11 11"><path d="M1.300 1h5.400l2 2v7.400H1.300z" fill="#eef0f3" stroke="#9aa0a9" stroke-width=".6"/><path d="M6.700 1v2h2" fill="#fff" stroke="#9aa0a9" stroke-width=".5"/><path d="M2.600 3.200h2.800M2.600 4.800h4.600" stroke="#aeb4bd" stroke-width=".7"/><rect x="2.400" y="6.200" width="3.600" height="2.600" fill="#c3c9d2"/><circle cx="7.300" cy="8" r="1.500" fill="#dfe3e8" stroke="#8f96a0" stroke-width=".5"/><path d="M8.300 9l1 1.100" stroke="#8f96a0" stroke-width=".6"/></svg></div>
<div class="t " style="left:469.2px;top:141.601px;font-size:8.116px;color:#1a1a1a;">Add workstations to domain</div>
<div class="ic" style="left:456.5px;top:154.768px;width:11px;height:11px"><svg width="11" height="11" viewBox="0 0 11 11"><path d="M1.300 1h5.400l2 2v7.400H1.300z" fill="#eef0f3" stroke="#9aa0a9" stroke-width=".6"/><path d="M6.700 1v2h2" fill="#fff" stroke="#9aa0a9" stroke-width=".5"/><path d="M2.600 3.200h2.800M2.600 4.800h4.600" stroke="#aeb4bd" stroke-width=".7"/><rect x="2.400" y="6.200" width="3.600" height="2.600" fill="#c3c9d2"/><circle cx="7.300" cy="8" r="1.500" fill="#dfe3e8" stroke="#8f96a0" stroke-width=".5"/><path d="M8.300 9l1 1.100" stroke="#8f96a0" stroke-width=".6"/></svg></div>
<div class="t " style="left:469.2px;top:154.268px;font-size:7.947px;color:#1a1a1a;">Adjust memory quotas for a process</div>
<div class="ic" style="left:456.5px;top:167.435px;width:11px;height:11px"><svg width="11" height="11" viewBox="0 0 11 11"><path d="M1.300 1h5.400l2 2v7.400H1.300z" fill="#eef0f3" stroke="#9aa0a9" stroke-width=".6"/><path d="M6.700 1v2h2" fill="#fff" stroke="#9aa0a9" stroke-width=".5"/><path d="M2.600 3.200h2.800M2.600 4.800h4.600" stroke="#aeb4bd" stroke-width=".7"/><rect x="2.400" y="6.200" width="3.600" height="2.600" fill="#c3c9d2"/><circle cx="7.300" cy="8" r="1.500" fill="#dfe3e8" stroke="#8f96a0" stroke-width=".5"/><path d="M8.300 9l1 1.100" stroke="#8f96a0" stroke-width=".6"/></svg></div>
<div class="t " style="left:469.2px;top:166.935px;font-size:8.155px;color:#1a1a1a;">Allow log on locally</div>
<div class="ic" style="left:456.5px;top:180.10199999999998px;width:11px;height:11px"><svg width="11" height="11" viewBox="0 0 11 11"><path d="M1.300 1h5.400l2 2v7.400H1.300z" fill="#eef0f3" stroke="#9aa0a9" stroke-width=".6"/><path d="M6.700 1v2h2" fill="#fff" stroke="#9aa0a9" stroke-width=".5"/><path d="M2.600 3.200h2.800M2.600 4.800h4.600" stroke="#aeb4bd" stroke-width=".7"/><rect x="2.400" y="6.200" width="3.600" height="2.600" fill="#c3c9d2"/><circle cx="7.300" cy="8" r="1.500" fill="#dfe3e8" stroke="#8f96a0" stroke-width=".5"/><path d="M8.300 9l1 1.100" stroke="#8f96a0" stroke-width=".6"/></svg></div>
<div class="t " style="left:469.2px;top:179.60199999999998px;font-size:7.928px;color:#1a1a1a;">Allow log on through Remote Desktop Services</div>
<div class="ic" style="left:456.5px;top:192.769px;width:11px;height:11px"><svg width="11" height="11" viewBox="0 0 11 11"><path d="M1.300 1h5.400l2 2v7.400H1.300z" fill="#eef0f3" stroke="#9aa0a9" stroke-width=".6"/><path d="M6.700 1v2h2" fill="#fff" stroke="#9aa0a9" stroke-width=".5"/><path d="M2.600 3.200h2.800M2.600 4.800h4.600" stroke="#aeb4bd" stroke-width=".7"/><rect x="2.400" y="6.200" width="3.600" height="2.600" fill="#c3c9d2"/><circle cx="7.300" cy="8" r="1.500" fill="#dfe3e8" stroke="#8f96a0" stroke-width=".5"/><path d="M8.300 9l1 1.100" stroke="#8f96a0" stroke-width=".6"/></svg></div>
<div class="t " style="left:469.2px;top:192.269px;font-size:7.844px;color:#1a1a1a;">Back up files and directories</div>
<div class="ic" style="left:456.5px;top:205.43599999999998px;width:11px;height:11px"><svg width="11" height="11" viewBox="0 0 11 11"><path d="M1.300 1h5.400l2 2v7.400H1.300z" fill="#eef0f3" stroke="#9aa0a9" stroke-width=".6"/><path d="M6.700 1v2h2" fill="#fff" stroke="#9aa0a9" stroke-width=".5"/><path d="M2.600 3.200h2.800M2.600 4.800h4.600" stroke="#aeb4bd" stroke-width=".7"/><rect x="2.400" y="6.200" width="3.600" height="2.600" fill="#c3c9d2"/><circle cx="7.300" cy="8" r="1.500" fill="#dfe3e8" stroke="#8f96a0" stroke-width=".5"/><path d="M8.300 9l1 1.100" stroke="#8f96a0" stroke-width=".6"/></svg></div>
<div class="t " style="left:469.2px;top:204.93599999999998px;font-size:7.76px;color:#1a1a1a;letter-spacing:-0.062px;">Bypass traverse checking</div>
<div class="ic" style="left:456.5px;top:218.103px;width:11px;height:11px"><svg width="11" height="11" viewBox="0 0 11 11"><path d="M1.300 1h5.400l2 2v7.400H1.300z" fill="#eef0f3" stroke="#9aa0a9" stroke-width=".6"/><path d="M6.700 1v2h2" fill="#fff" stroke="#9aa0a9" stroke-width=".5"/><path d="M2.600 3.200h2.800M2.600 4.800h4.600" stroke="#aeb4bd" stroke-width=".7"/><rect x="2.400" y="6.200" width="3.600" height="2.600" fill="#c3c9d2"/><circle cx="7.300" cy="8" r="1.500" fill="#dfe3e8" stroke="#8f96a0" stroke-width=".5"/><path d="M8.300 9l1 1.100" stroke="#8f96a0" stroke-width=".6"/></svg></div>
<div class="t " style="left:469.2px;top:217.603px;font-size:7.883px;color:#1a1a1a;">Change the system time</div>
<div class="ic" style="left:456.5px;top:230.76999999999998px;width:11px;height:11px"><svg width="11" height="11" viewBox="0 0 11 11"><path d="M1.300 1h5.400l2 2v7.400H1.300z" fill="#eef0f3" stroke="#9aa0a9" stroke-width=".6"/><path d="M6.700 1v2h2" fill="#fff" stroke="#9aa0a9" stroke-width=".5"/><path d="M2.600 3.200h2.800M2.600 4.800h4.600" stroke="#aeb4bd" stroke-width=".7"/><rect x="2.400" y="6.200" width="3.600" height="2.600" fill="#c3c9d2"/><circle cx="7.300" cy="8" r="1.500" fill="#dfe3e8" stroke="#8f96a0" stroke-width=".5"/><path d="M8.300 9l1 1.100" stroke="#8f96a0" stroke-width=".6"/></svg></div>
<div class="t " style="left:469.2px;top:230.26999999999998px;font-size:7.87px;color:#1a1a1a;">Change the time zone</div>
<div class="ic" style="left:456.5px;top:243.43699999999998px;width:11px;height:11px"><svg width="11" height="11" viewBox="0 0 11 11"><path d="M1.300 1h5.400l2 2v7.400H1.300z" fill="#eef0f3" stroke="#9aa0a9" stroke-width=".6"/><path d="M6.700 1v2h2" fill="#fff" stroke="#9aa0a9" stroke-width=".5"/><path d="M2.600 3.200h2.800M2.600 4.800h4.600" stroke="#aeb4bd" stroke-width=".7"/><rect x="2.400" y="6.200" width="3.600" height="2.600" fill="#c3c9d2"/><circle cx="7.300" cy="8" r="1.500" fill="#dfe3e8" stroke="#8f96a0" stroke-width=".5"/><path d="M8.300 9l1 1.100" stroke="#8f96a0" stroke-width=".6"/></svg></div>
<div class="t " style="left:469.2px;top:242.93699999999998px;font-size:7.76px;color:#1a1a1a;letter-spacing:-0.069px;">Create a pagefile</div>
<div class="ic" style="left:456.5px;top:256.104px;width:11px;height:11px"><svg width="11" height="11" viewBox="0 0 11 11"><path d="M1.300 1h5.400l2 2v7.400H1.300z" fill="#eef0f3" stroke="#9aa0a9" stroke-width=".6"/><path d="M6.700 1v2h2" fill="#fff" stroke="#9aa0a9" stroke-width=".5"/><path d="M2.600 3.200h2.800M2.600 4.800h4.600" stroke="#aeb4bd" stroke-width=".7"/><rect x="2.400" y="6.200" width="3.600" height="2.600" fill="#c3c9d2"/><circle cx="7.300" cy="8" r="1.500" fill="#dfe3e8" stroke="#8f96a0" stroke-width=".5"/><path d="M8.300 9l1 1.100" stroke="#8f96a0" stroke-width=".6"/></svg></div>
<div class="t " style="left:469.2px;top:255.60399999999998px;font-size:7.806px;color:#1a1a1a;">Create a token object</div>
<div class="ic" style="left:456.5px;top:268.77099999999996px;width:11px;height:11px"><svg width="11" height="11" viewBox="0 0 11 11"><path d="M1.300 1h5.400l2 2v7.400H1.300z" fill="#eef0f3" stroke="#9aa0a9" stroke-width=".6"/><path d="M6.700 1v2h2" fill="#fff" stroke="#9aa0a9" stroke-width=".5"/><path d="M2.600 3.200h2.800M2.600 4.800h4.600" stroke="#aeb4bd" stroke-width=".7"/><rect x="2.400" y="6.200" width="3.600" height="2.600" fill="#c3c9d2"/><circle cx="7.300" cy="8" r="1.500" fill="#dfe3e8" stroke="#8f96a0" stroke-width=".5"/><path d="M8.300 9l1 1.100" stroke="#8f96a0" stroke-width=".6"/></svg></div>
<div class="t " style="left:469.2px;top:268.27099999999996px;font-size:7.824px;color:#1a1a1a;">Create global objects</div>
<div class="ic" style="left:456.5px;top:281.438px;width:11px;height:11px"><svg width="11" height="11" viewBox="0 0 11 11"><path d="M1.300 1h5.400l2 2v7.400H1.300z" fill="#eef0f3" stroke="#9aa0a9" stroke-width=".6"/><path d="M6.700 1v2h2" fill="#fff" stroke="#9aa0a9" stroke-width=".5"/><path d="M2.600 3.200h2.800M2.600 4.800h4.600" stroke="#aeb4bd" stroke-width=".7"/><rect x="2.400" y="6.200" width="3.600" height="2.600" fill="#c3c9d2"/><circle cx="7.300" cy="8" r="1.500" fill="#dfe3e8" stroke="#8f96a0" stroke-width=".5"/><path d="M8.300 9l1 1.100" stroke="#8f96a0" stroke-width=".6"/></svg></div>
<div class="t " style="left:469.2px;top:280.938px;font-size:7.796px;color:#1a1a1a;">Create permanent shared objects</div>
<div class="ic" style="left:456.5px;top:294.105px;width:11px;height:11px"><svg width="11" height="11" viewBox="0 0 11 11"><path d="M1.300 1h5.400l2 2v7.400H1.300z" fill="#eef0f3" stroke="#9aa0a9" stroke-width=".6"/><path d="M6.700 1v2h2" fill="#fff" stroke="#9aa0a9" stroke-width=".5"/><path d="M2.600 3.200h2.800M2.600 4.800h4.600" stroke="#aeb4bd" stroke-width=".7"/><rect x="2.400" y="6.200" width="3.600" height="2.600" fill="#c3c9d2"/><circle cx="7.300" cy="8" r="1.500" fill="#dfe3e8" stroke="#8f96a0" stroke-width=".5"/><path d="M8.300 9l1 1.100" stroke="#8f96a0" stroke-width=".6"/></svg></div>
<div class="t " style="left:469.2px;top:293.605px;font-size:7.854px;color:#1a1a1a;">Create symbolic links</div>
<div class="ic" style="left:456.5px;top:306.772px;width:11px;height:11px"><svg width="11" height="11" viewBox="0 0 11 11"><path d="M1.300 1h5.400l2 2v7.400H1.300z" fill="#eef0f3" stroke="#9aa0a9" stroke-width=".6"/><path d="M6.700 1v2h2" fill="#fff" stroke="#9aa0a9" stroke-width=".5"/><path d="M2.600 3.200h2.800M2.600 4.800h4.600" stroke="#aeb4bd" stroke-width=".7"/><rect x="2.400" y="6.200" width="3.600" height="2.600" fill="#c3c9d2"/><circle cx="7.300" cy="8" r="1.500" fill="#dfe3e8" stroke="#8f96a0" stroke-width=".5"/><path d="M8.300 9l1 1.100" stroke="#8f96a0" stroke-width=".6"/></svg></div>
<div class="t " style="left:469.2px;top:306.272px;font-size:7.894px;color:#1a1a1a;">Debug programs</div>
<div class="ic" style="left:456.5px;top:319.43899999999996px;width:11px;height:11px"><svg width="11" height="11" viewBox="0 0 11 11"><path d="M1.300 1h5.400l2 2v7.400H1.300z" fill="#eef0f3" stroke="#9aa0a9" stroke-width=".6"/><path d="M6.700 1v2h2" fill="#fff" stroke="#9aa0a9" stroke-width=".5"/><path d="M2.600 3.200h2.800M2.600 4.800h4.600" stroke="#aeb4bd" stroke-width=".7"/><rect x="2.400" y="6.200" width="3.600" height="2.600" fill="#c3c9d2"/><circle cx="7.300" cy="8" r="1.500" fill="#dfe3e8" stroke="#8f96a0" stroke-width=".5"/><path d="M8.300 9l1 1.100" stroke="#8f96a0" stroke-width=".6"/></svg></div>
<div class="t " style="left:469.2px;top:318.93899999999996px;font-size:7.974px;color:#1a1a1a;">Deny access to this computer from the network</div>
<div class="ic" style="left:456.5px;top:332.106px;width:11px;height:11px"><svg width="11" height="11" viewBox="0 0 11 11"><path d="M1.300 1h5.400l2 2v7.400H1.300z" fill="#eef0f3" stroke="#9aa0a9" stroke-width=".6"/><path d="M6.700 1v2h2" fill="#fff" stroke="#9aa0a9" stroke-width=".5"/><path d="M2.600 3.200h2.800M2.600 4.800h4.600" stroke="#aeb4bd" stroke-width=".7"/><rect x="2.400" y="6.200" width="3.600" height="2.600" fill="#c3c9d2"/><circle cx="7.300" cy="8" r="1.500" fill="#dfe3e8" stroke="#8f96a0" stroke-width=".5"/><path d="M8.300 9l1 1.100" stroke="#8f96a0" stroke-width=".6"/></svg></div>
<div class="t " style="left:469.2px;top:331.606px;font-size:7.862px;color:#1a1a1a;">Deny log on as a batch job</div>
<div class="r" style="left:454px;top:345px;width:490px;height:13px;background:#f0f0f0;"></div>
<div class="ic" style="left:456.5px;top:344.773px;width:11px;height:11px"><svg width="11" height="11" viewBox="0 0 11 11"><path d="M1 .9h6.200l2 1.800v7.600l-1.200-.8-1.400.9-1.600-.9-1.600.9L1 9.600z" fill="#4a98ea"/><path d="M2.400 3h3.200M2.400 4.800h4.800M2.400 6.600h4.800" stroke="#7db6f2" stroke-width=".8"/><rect x="5.600" y="6.400" width="2.600" height="2.400" fill="#3a86dc"/></svg></div>
<div class="t " style="left:469.2px;top:344.273px;font-size:7.76px;color:#1a1a1a;letter-spacing:-0.06px;">Deny log on as a service</div>
<div class="ic" style="left:456.5px;top:357.44px;width:11px;height:11px"><svg width="11" height="11" viewBox="0 0 11 11"><path d="M1.300 1h5.400l2 2v7.400H1.300z" fill="#eef0f3" stroke="#9aa0a9" stroke-width=".6"/><path d="M6.700 1v2h2" fill="#fff" stroke="#9aa0a9" stroke-width=".5"/><path d="M2.600 3.200h2.800M2.600 4.800h4.600" stroke="#aeb4bd" stroke-width=".7"/><rect x="2.400" y="6.200" width="3.600" height="2.600" fill="#c3c9d2"/><circle cx="7.300" cy="8" r="1.500" fill="#dfe3e8" stroke="#8f96a0" stroke-width=".5"/><path d="M8.300 9l1 1.100" stroke="#8f96a0" stroke-width=".6"/></svg></div>
<div class="t " style="left:469.2px;top:356.94px;font-size:7.994px;color:#1a1a1a;">Deny log on locally</div>
<div class="ic" style="left:456.5px;top:370.10699999999997px;width:11px;height:11px"><svg width="11" height="11" viewBox="0 0 11 11"><path d="M1.300 1h5.400l2 2v7.400H1.300z" fill="#eef0f3" stroke="#9aa0a9" stroke-width=".6"/><path d="M6.700 1v2h2" fill="#fff" stroke="#9aa0a9" stroke-width=".5"/><path d="M2.600 3.200h2.800M2.600 4.800h4.600" stroke="#aeb4bd" stroke-width=".7"/><rect x="2.400" y="6.200" width="3.600" height="2.600" fill="#c3c9d2"/><circle cx="7.300" cy="8" r="1.500" fill="#dfe3e8" stroke="#8f96a0" stroke-width=".5"/><path d="M8.300 9l1 1.100" stroke="#8f96a0" stroke-width=".6"/></svg></div>
<div class="t " style="left:469.2px;top:369.60699999999997px;font-size:7.825px;color:#1a1a1a;">Deny log on through Remote Desktop Services</div>
<div class="ic" style="left:456.5px;top:382.774px;width:11px;height:11px"><svg width="11" height="11" viewBox="0 0 11 11"><path d="M1.300 1h5.400l2 2v7.400H1.300z" fill="#eef0f3" stroke="#9aa0a9" stroke-width=".6"/><path d="M6.700 1v2h2" fill="#fff" stroke="#9aa0a9" stroke-width=".5"/><path d="M2.600 3.200h2.800M2.600 4.800h4.600" stroke="#aeb4bd" stroke-width=".7"/><rect x="2.400" y="6.200" width="3.600" height="2.600" fill="#c3c9d2"/><circle cx="7.300" cy="8" r="1.500" fill="#dfe3e8" stroke="#8f96a0" stroke-width=".5"/><path d="M8.300 9l1 1.100" stroke="#8f96a0" stroke-width=".6"/></svg></div>
<div class="t " style="left:469.2px;top:382.274px;font-size:8px;color:#1a1a1a;letter-spacing:-0.032px;">Enable computer and user accounts to be trusted for delegation</div>
</div></div>
<div class="r" style="left:234px;top:391px;width:750px;height:1px;background:#a3a6ab;"></div>
<div class="r" style="left:234px;top:86px;width:750px;height:1px;background:#a3a6ab;"></div>
<div class="r" style="left:972px;top:87px;width:11px;height:304px;background:#f0f0f0;"></div>
<div class="r" style="left:972px;top:98px;width:10px;height:138px;background:#cdcdcd;"></div>
<div class="r" style="left:983px;top:87px;width:1px;height:304px;background:#9a9a9a;"></div>
<div class="r" style="left:983px;top:391px;width:1px;height:16px;background:#cfcfcf;"></div>
<svg class="ic" style="left:973.500px;top:91px" width="7" height="5" viewBox="0 0 7 5"><path d="M.7 4l2.800-2.800L6.300 4" fill="none" stroke="#505050" stroke-width="1.200"/></svg>
<svg class="ic" style="left:973.500px;top:383px" width="7" height="5" viewBox="0 0 7 5"><path d="M.7 1l2.800 2.800L6.300 1" fill="none" stroke="#505050" stroke-width="1.200"/></svg>
<div class="r" style="left:667px;top:86px;width:279px;height:339px;background:#f0f0f0;border:1px solid #5fa7e0;box-sizing:border-box"></div>
<div class="r" style="left:668px;top:87px;width:277px;height:20px;background:#fff;"></div>
<div class="t " style="left:673.2px;top:90.7px;font-size:7.85px;color:#000;-webkit-text-stroke:0;">Deny log on as a service Properties</div>
<div class="t " style="left:898.3px;top:89.8px;font-size:9.5px;color:#000;-webkit-text-stroke:0;">?</div>
<svg class="ic" style="left:926px;top:93px" width="8" height="8" viewBox="0 0 8 8"><path d="M.7 .4l6.600 7M7.300 .4L.7 7.400" stroke="#333" stroke-width=".85"/></svg>
<div class="r" style="left:672px;top:125px;width:268px;height:275px;background:#fff;border:1px solid #d9d9d9;box-sizing:border-box"></div>
<div class="r" style="left:672px;top:112px;width:81px;height:14px;background:#fff;border:1px solid #d9d9d9;border-bottom:none;box-sizing:border-box"></div>
<div class="t " style="left:677.5px;top:112.39999999999999px;font-size:7.0px;color:#000;-webkit-text-stroke:0;">Security Policy Setting</div>
<div class="r" style="left:752px;top:113px;width:29px;height:12px;background:#f0f0f0;border:1px solid #d9d9d9;border-bottom:none;box-sizing:border-box"></div>
<div class="t " style="left:755.8px;top:114.3px;font-size:7.0px;color:#000;-webkit-text-stroke:0;">Explain</div>
<div class="ic" style="left:682px;top:134px;width:21px;height:22.5px"><svg width="21" height="22.5" viewBox="0 0 21 22.500"><defs><linearGradient id="bsg" x1="0" x2="1"><stop offset="0" stop-color="#e2e5e9"/><stop offset="1" stop-color="#8f97a2"/></linearGradient></defs><path d="M3.500 2L10 .8v19.400L3.500 19z" fill="#ccd1d8" stroke="#8a929e" stroke-width=".5"/><path d="M4.300 3.600l5-.8M4.300 5.800l5-.7M4.300 8l5-.6M4.300 10.200l5-.5" stroke="#8f98a5" stroke-width=".9"/><path d="M10 .8l4.500.9v19.800L10 20.200z" fill="#9aa2ae"/><path d="M14.500 1.700L20.500 3.500v15.500l-6 2.500z" fill="url(#bsg)" stroke="#8a929e" stroke-width=".4"/><rect x="1" y="11.500" width="7.500" height="9" fill="#f1e7b6" stroke="#b5a66c" stroke-width=".7"/><path d="M2.500 14h4.500M2.500 16h4.500M2.500 18h3" stroke="#cdbf86" stroke-width=".7"/><circle cx="13" cy="18.800" r=".9" fill="#4fc33f"/><ellipse cx="11" cy="21.600" rx="9" ry=".9" fill="#dcdcdc"/></svg></div>
<div class="t " style="left:715.3px;top:133.1px;font-size:7.0px;color:#000;-webkit-text-stroke:0;">Deny log on as a service</div>
<div class="r" style="left:682px;top:165px;width:9px;height:9px;background:#fff;border:1px solid #4a4a4a;box-sizing:border-box"></div>
<svg class="ic" style="left:683px;top:166px" width="7" height="7" viewBox="0 0 7 7"><path d="M1 3.500l1.800 1.900L6 1.300" fill="none" stroke="#222" stroke-width=".9"/></svg>
<div class="t " style="left:693.2px;top:163.7px;font-size:7.0px;color:#000;-webkit-text-stroke:0;">Define these policy settings:</div>
<div class="r" style="left:681px;top:180px;width:239px;height:112px;background:#fff;border:1px solid #9a9da2;box-sizing:border-box"></div>
<div class="t " style="left:685px;top:181.4px;font-size:7.0px;color:#000;-webkit-text-stroke:0;">Administrator</div>
<div class="t " style="left:685px;top:189.9px;font-size:7.0px;color:#000;-webkit-text-stroke:0;">Administrators</div>
<div class="t " style="left:685px;top:198.4px;font-size:7.0px;color:#000;-webkit-text-stroke:0;">EXAMPLE\Administrator</div>
<div class="r" style="left:683px;top:303px;width:98px;height:14px;background:#e1e1e1;border:1px solid #0078d7;box-shadow:inset 0 0 0 1px rgba(0,120,215,.3);box-sizing:border-box"></div>
<div class="t " style="left:683px;top:304.40000000000003px;font-size:7.0px;color:#000;-webkit-text-stroke:0;width:98px;text-align:center;">Add User or Group...</div>
<div class="r" style="left:787px;top:303px;width:49px;height:14px;background:#cccccc;border:1px solid #bfbfbf;box-sizing:border-box"></div>
<div class="t " style="left:787px;top:304.40000000000003px;font-size:7.0px;color:#8a8a8a;-webkit-text-stroke:0;width:49px;text-align:center;">Remove</div>
<div class="r" style="left:783.5px;top:405px;width:49px;height:14px;background:#e1e1e1;border:1px solid #b2b2b2;box-sizing:border-box"></div>
<div class="t " style="left:783.5px;top:406.40000000000003px;font-size:7.0px;color:#000;-webkit-text-stroke:0;width:49px;text-align:center;">OK</div>
<div class="r" style="left:838px;top:405px;width:49px;height:14px;background:#e1e1e1;border:1px solid #b2b2b2;box-sizing:border-box"></div>
<div class="t " style="left:838px;top:406.40000000000003px;font-size:7.0px;color:#000;-webkit-text-stroke:0;width:49px;text-align:center;">Cancel</div>
<div class="r" style="left:892px;top:405px;width:49px;height:14px;background:#e1e1e1;border:1px solid #b2b2b2;box-sizing:border-box"></div>
<div class="t " style="left:892px;top:406.40000000000003px;font-size:7.0px;color:#000;-webkit-text-stroke:0;width:49px;text-align:center;">Apply</div>
<div class="r" style="left:63px;top:170px;width:165px;height:12px;background:#ffff36;mix-blend-mode:multiply"></div>
<div class="r" style="left:309px;top:220px;width:102px;height:12px;background:#ffff36;mix-blend-mode:multiply"></div>
<div class="r" style="left:456px;top:345px;width:102px;height:13px;background:#ffff36;mix-blend-mode:multiply"></div>
<div class="r" style="left:680px;top:179px;width:92px;height:35px;background:#ffff36;mix-blend-mode:multiply"></div>
</div></body></html>
